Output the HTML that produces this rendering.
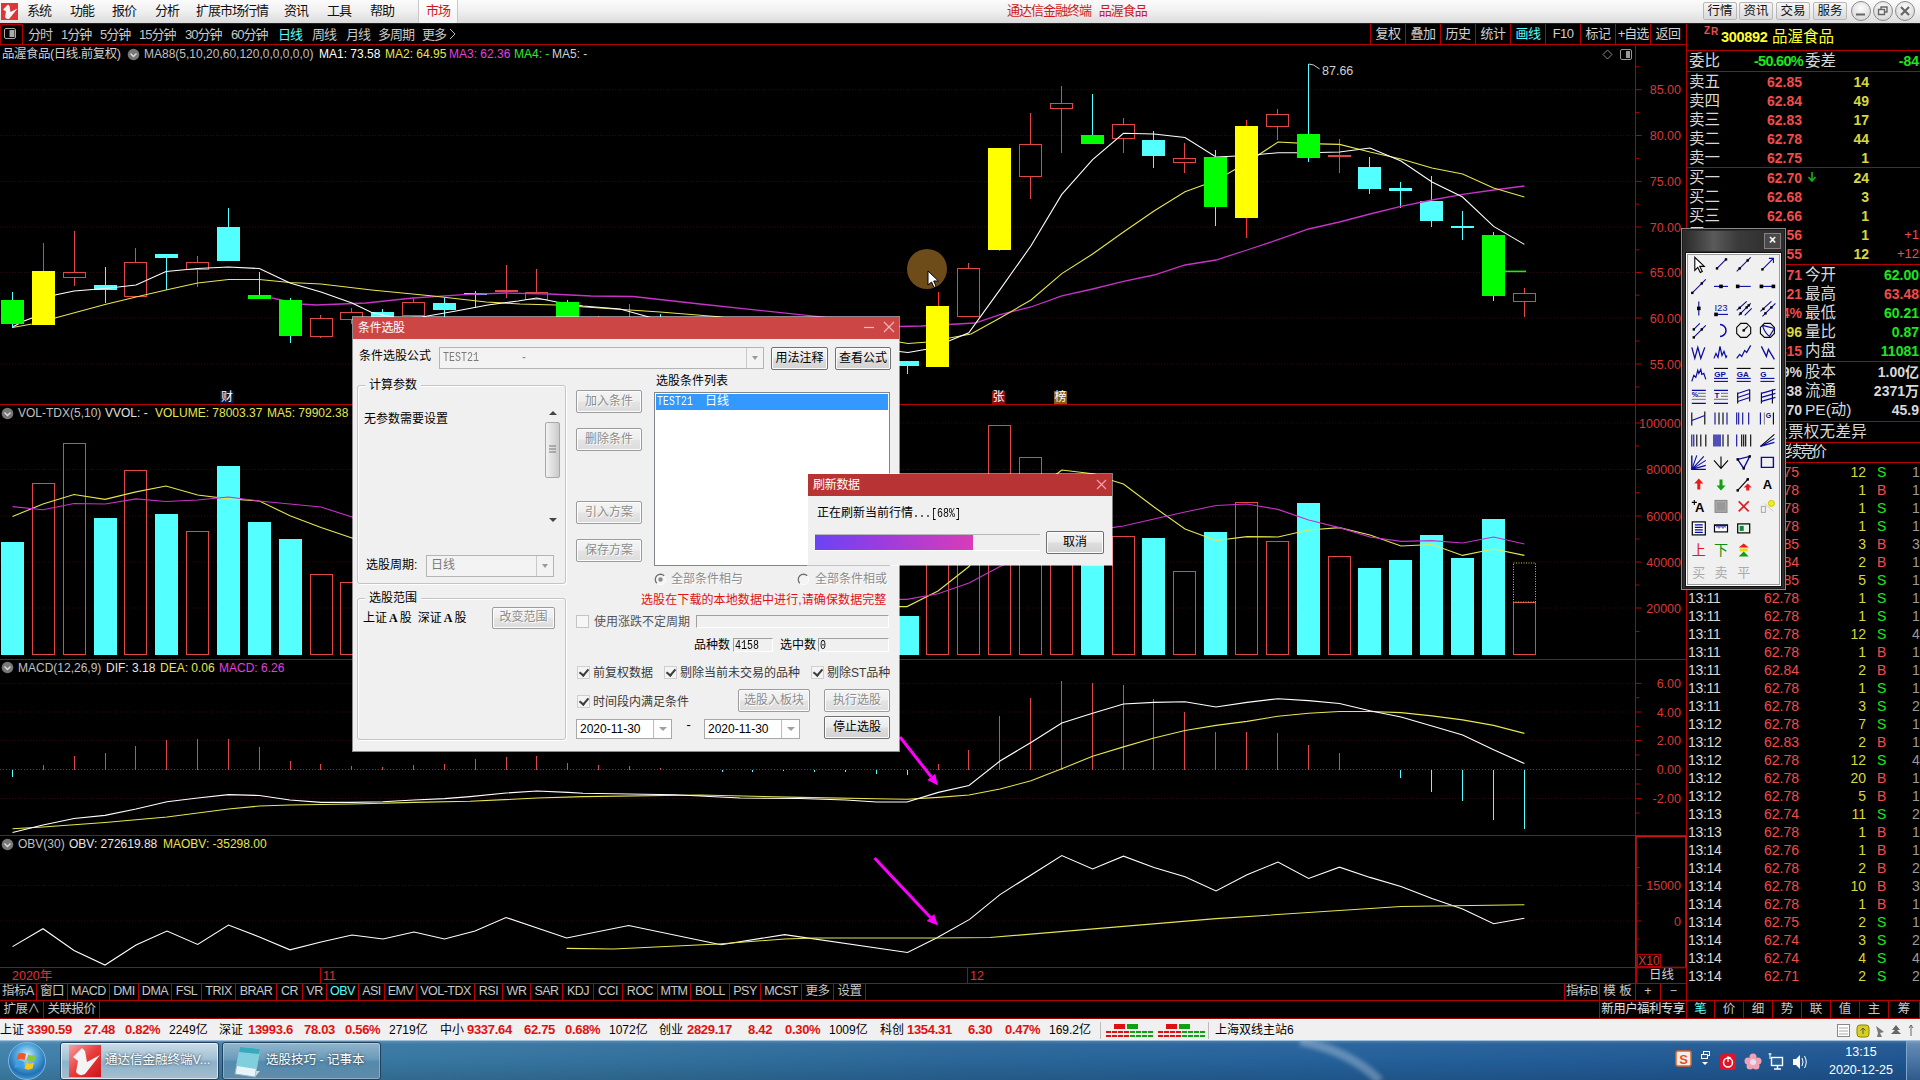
<!DOCTYPE html><html lang="zh-CN"><head><meta charset="utf-8"><title>通达信金融终端 品渥食品</title><style>

*{box-sizing:border-box;margin:0;padding:0}
html,body{width:1920px;height:1080px;overflow:hidden;background:#000}
body{position:relative;font-family:"Liberation Sans","Noto Sans CJK SC",sans-serif;font-size:12px;color:#c8c8c8;line-height:1}
svg text{font-family:"Liberation Sans","Noto Sans CJK SC",sans-serif}
.abs{position:absolute}
.t{position:absolute;white-space:nowrap}
#menubar{left:0;top:0;width:1920px;height:23px;background:linear-gradient(#fbfbfb,#f1f1f1 45%,#dcdcdc);}
#menubar .t{top:4px;font-size:13px;color:#111;letter-spacing:-1px}
.tbtn{position:absolute;top:2px;height:18px;border:1px solid #b8b8b8;border-radius:2px;background:linear-gradient(#f6f6f6,#d9d9d9);font-size:12.5px;color:#111;text-align:center;line-height:16px}
.wc{position:absolute;top:1px;width:20px;height:20px;border-radius:50%;border:1px solid #8a8a8a;background:radial-gradient(circle at 50% 35%,#fdfdfd,#cfcfcf);}
#prow .t{top:28px;font-size:13px;color:#c8c8c8}
.rb{position:absolute;top:24px;height:21px;border-left:1px solid #b40000;font-size:13px;color:#d0d0d0;text-align:center;line-height:20px}
#rp .t{font-size:14px;line-height:18px}
.w{color:#d8d8d8}.r{color:#f04c4c}.g{color:#1ee61e}.y{color:#d8d83c}.gy{color:#9a9a9a}
.b{font-weight:bold}
.hl{position:absolute;height:1px;background:#b40000}
.tab{position:absolute;top:983px;height:18px;border-right:1px solid #b40000;border-bottom:1px solid #b40000;font-size:12.5px;color:#c8c8c8;text-align:center;line-height:17px;white-space:nowrap}
#status{left:0;top:1019px;width:1920px;height:21px;background:#f0f0f0;border-top:1px solid #fff}
#status .t{top:4px;font-size:12px;color:#000}
#status .r{color:#e01010;font-weight:bold;font-size:13px;top:3px}
#taskbar{left:0;top:1040px;width:1920px;height:40px;background:linear-gradient(180deg,rgba(255,255,255,.18) 0,rgba(255,255,255,.04) 8%,rgba(0,0,0,0) 50%,rgba(0,0,0,.12) 100%),linear-gradient(90deg,#3f80aa 0,#36759f 25%,#2a6698 50%,#24609a 70%,#1f5590 100%);border-top:1px solid #9fc0dc}
.tk{position:absolute;top:1px;height:38px;border:1px solid #20405c;border-radius:3px;background:linear-gradient(rgba(255,255,255,.72),rgba(255,255,255,.52) 45%,rgba(255,255,255,.42) 52%,rgba(255,255,255,.55));box-shadow:inset 0 0 0 1px rgba(255,255,255,.6)}
.tk .t{top:11px;left:44px;font-size:12.5px;color:#fff;text-shadow:0 0 3px #123}


.dlg{position:absolute;background:#f0f0f0;color:#000;font-size:12px;font-family:"Liberation Sans","Noto Sans CJK SC",sans-serif}
.dlg .t{color:#000;font-size:12px;line-height:14px}
.dlg .ttl{position:absolute;left:0;top:0;right:0;color:#fff}
.btn{position:absolute;border:1px solid #707070;background:linear-gradient(#f4f4f4,#ececec 48%,#dedede 52%,#d2d2d2);box-shadow:inset 0 0 0 1px #fcfcfc;border-radius:2px;text-align:center;font-size:12px;color:#000;white-space:nowrap}
.btn.dis{color:#8c8c8c;border-color:#9c9c9c;background:linear-gradient(#f4f4f4,#eee 48%,#e4e4e4 52%,#dcdcdc);text-shadow:1px 1px 0 #fff}
.grp{position:absolute;border:1px solid #c4c4c4;border-radius:3px;box-shadow:inset 1px 1px 0 #fff,1px 1px 0 #fff}
.grp>b{position:absolute;top:-8px;left:7px;background:#f0f0f0;padding:0 4px;font-weight:normal;font-size:12px;line-height:14px;white-space:nowrap}
.cmb{position:absolute;border:1px solid #b4b4b4;background:#f3f3f3;color:#7a7a7a;font-size:12px;white-space:nowrap}
.cmb i{position:absolute;right:0;top:0;bottom:0;width:17px;border-left:1px solid #c8c8c8}
.cmb i:after{content:"";position:absolute;left:5px;top:50%;margin-top:-2px;border:3.5px solid transparent;border-top:4px solid #999;border-bottom:0}
.mono{font-family:"Liberation Mono",monospace;font-size:12px;display:inline-block;transform:scaleX(.833);transform-origin:0 50%;white-space:nowrap}
.chk{position:absolute;width:13px;height:13px;border:1px solid #cfcfcf;background:#f4f4f4}
.chk.on:after{content:"";position:absolute;left:3px;top:0px;width:4px;height:7px;border:solid #3c3c3c;border-width:0 2px 2px 0;transform:rotate(40deg)}
.chk.dis{border-color:#c4c4c4;background:#f6f6f6}
.fld{position:absolute;border-top:1px solid #a0a0a0;border-left:1px solid #a0a0a0;border-bottom:1px solid #fff;border-right:1px solid #fff;font-size:12px;white-space:nowrap;line-height:12px}
.dp{position:absolute;border:1px solid #a8a8a8;background:#fff;font-size:12px;white-space:nowrap;color:#000}
.dp i{position:absolute;right:0;top:0;bottom:0;width:18px;border-left:1px solid #bbb;background:#fdfdfd}
.dp i:after{content:"";position:absolute;left:5px;top:50%;margin-top:-2px;border:4px solid transparent;border-top:4px solid #a0a0a0;border-bottom:0}

</style></head><body>
<svg id="chart" width="1687" height="1000" viewBox="0 0 1687 1000" style="position:absolute;left:0;top:0" shape-rendering="auto">
<line x1="0" y1="89.7" x2="1636" y2="89.7" stroke="#340707" stroke-width="1" stroke-dasharray="1,2"/>
<line x1="0" y1="135.5" x2="1636" y2="135.5" stroke="#340707" stroke-width="1" stroke-dasharray="1,2"/>
<line x1="0" y1="181.4" x2="1636" y2="181.4" stroke="#340707" stroke-width="1" stroke-dasharray="1,2"/>
<line x1="0" y1="227" x2="1636" y2="227" stroke="#340707" stroke-width="1" stroke-dasharray="1,2"/>
<line x1="0" y1="272.5" x2="1636" y2="272.5" stroke="#340707" stroke-width="1" stroke-dasharray="1,2"/>
<line x1="0" y1="318" x2="1636" y2="318" stroke="#340707" stroke-width="1" stroke-dasharray="1,2"/>
<line x1="0" y1="364" x2="1636" y2="364" stroke="#340707" stroke-width="1" stroke-dasharray="1,2"/>
<line x1="0" y1="423" x2="1636" y2="423" stroke="#340707" stroke-width="1" stroke-dasharray="1,2"/>
<line x1="0" y1="469.5" x2="1636" y2="469.5" stroke="#340707" stroke-width="1" stroke-dasharray="1,2"/>
<line x1="0" y1="516" x2="1636" y2="516" stroke="#340707" stroke-width="1" stroke-dasharray="1,2"/>
<line x1="0" y1="562" x2="1636" y2="562" stroke="#340707" stroke-width="1" stroke-dasharray="1,2"/>
<line x1="0" y1="608" x2="1636" y2="608" stroke="#340707" stroke-width="1" stroke-dasharray="1,2"/>
<line x1="0" y1="683.4" x2="1636" y2="683.4" stroke="#340707" stroke-width="1" stroke-dasharray="1,2"/>
<line x1="0" y1="712" x2="1636" y2="712" stroke="#340707" stroke-width="1" stroke-dasharray="1,2"/>
<line x1="0" y1="740.5" x2="1636" y2="740.5" stroke="#340707" stroke-width="1" stroke-dasharray="1,2"/>
<line x1="0" y1="798.6" x2="1636" y2="798.6" stroke="#340707" stroke-width="1" stroke-dasharray="1,2"/>
<line x1="0" y1="769.5" x2="1636" y2="769.5" stroke="#a02020" stroke-width="1" stroke-dasharray="1,2"/>
<line x1="0" y1="885.5" x2="1636" y2="885.5" stroke="#340707" stroke-width="1" stroke-dasharray="1,2"/>
<line x1="0" y1="921" x2="1636" y2="921" stroke="#340707" stroke-width="1" stroke-dasharray="1,2"/>
<line x1="0" y1="44.5" x2="1687" y2="44.5" stroke="#b40000" stroke-width="1"/>
<line x1="0" y1="404.5" x2="1687" y2="404.5" stroke="#b40000" stroke-width="1"/>
<line x1="0" y1="659.5" x2="1687" y2="659.5" stroke="#b40000" stroke-width="1"/>
<line x1="0" y1="835.5" x2="1687" y2="835.5" stroke="#b40000" stroke-width="1"/>
<line x1="0" y1="967.5" x2="1687" y2="967.5" stroke="#b40000" stroke-width="1"/>
<line x1="0" y1="983.5" x2="1687" y2="983.5" stroke="#b40000" stroke-width="1"/>
<line x1="1635.5" y1="45" x2="1635.5" y2="983" stroke="#b40000" stroke-width="1"/>
<line x1="1686.5" y1="24" x2="1686.5" y2="1018" stroke="#b40000" stroke-width="1"/>
<rect x="1636" y="836.5" width="50" height="131" fill="none" stroke="#cc1616" stroke-width="1.5"/>
<line x1="1636" y1="66.8" x2="1639" y2="66.8" stroke="#b40000"/>
<line x1="1636" y1="112.6" x2="1639" y2="112.6" stroke="#b40000"/>
<line x1="1636" y1="158.4" x2="1639" y2="158.4" stroke="#b40000"/>
<line x1="1636" y1="204.2" x2="1639" y2="204.2" stroke="#b40000"/>
<line x1="1636" y1="249.8" x2="1639" y2="249.8" stroke="#b40000"/>
<line x1="1636" y1="295.2" x2="1639" y2="295.2" stroke="#b40000"/>
<line x1="1636" y1="341" x2="1639" y2="341" stroke="#b40000"/>
<line x1="1636" y1="387" x2="1639" y2="387" stroke="#b40000"/>
<line x1="1636" y1="446" x2="1639" y2="446" stroke="#b40000"/>
<line x1="1636" y1="492.7" x2="1639" y2="492.7" stroke="#b40000"/>
<line x1="1636" y1="539" x2="1639" y2="539" stroke="#b40000"/>
<line x1="1636" y1="585" x2="1639" y2="585" stroke="#b40000"/>
<line x1="1636" y1="631.5" x2="1639" y2="631.5" stroke="#b40000"/>
<line x1="1636" y1="697.7" x2="1639" y2="697.7" stroke="#b40000"/>
<line x1="1636" y1="726.3" x2="1639" y2="726.3" stroke="#b40000"/>
<line x1="1636" y1="755" x2="1639" y2="755" stroke="#b40000"/>
<line x1="1636" y1="784" x2="1639" y2="784" stroke="#b40000"/>
<line x1="1636" y1="813" x2="1639" y2="813" stroke="#b40000"/>
<line x1="1636" y1="867.5" x2="1639" y2="867.5" stroke="#b40000"/>
<line x1="1636" y1="903" x2="1639" y2="903" stroke="#b40000"/>
<line x1="1636" y1="939" x2="1639" y2="939" stroke="#b40000"/>
<line x1="1636" y1="89.7" x2="1641" y2="89.7" stroke="#b40000"/>
<text x="1681" y="94.2" text-anchor="end" font-size="12.5" fill="#d83838">85.00</text>
<line x1="1636" y1="135.5" x2="1641" y2="135.5" stroke="#b40000"/>
<text x="1681" y="140.0" text-anchor="end" font-size="12.5" fill="#d83838">80.00</text>
<line x1="1636" y1="181.4" x2="1641" y2="181.4" stroke="#b40000"/>
<text x="1681" y="185.9" text-anchor="end" font-size="12.5" fill="#d83838">75.00</text>
<line x1="1636" y1="227" x2="1641" y2="227" stroke="#b40000"/>
<text x="1681" y="231.5" text-anchor="end" font-size="12.5" fill="#d83838">70.00</text>
<line x1="1636" y1="272.5" x2="1641" y2="272.5" stroke="#b40000"/>
<text x="1681" y="277.0" text-anchor="end" font-size="12.5" fill="#d83838">65.00</text>
<line x1="1636" y1="318" x2="1641" y2="318" stroke="#b40000"/>
<text x="1681" y="322.5" text-anchor="end" font-size="12.5" fill="#d83838">60.00</text>
<line x1="1636" y1="364" x2="1641" y2="364" stroke="#b40000"/>
<text x="1681" y="368.5" text-anchor="end" font-size="12.5" fill="#d83838">55.00</text>
<line x1="1636" y1="469.5" x2="1641" y2="469.5" stroke="#b40000"/>
<text x="1681" y="474.0" text-anchor="end" font-size="12.5" fill="#d83838">80000</text>
<line x1="1636" y1="516" x2="1641" y2="516" stroke="#b40000"/>
<text x="1681" y="520.5" text-anchor="end" font-size="12.5" fill="#d83838">60000</text>
<line x1="1636" y1="562" x2="1641" y2="562" stroke="#b40000"/>
<text x="1681" y="566.5" text-anchor="end" font-size="12.5" fill="#d83838">40000</text>
<line x1="1636" y1="608" x2="1641" y2="608" stroke="#b40000"/>
<text x="1681" y="612.5" text-anchor="end" font-size="12.5" fill="#d83838">20000</text>
<line x1="1636" y1="423" x2="1641" y2="423" stroke="#b40000"/><text x="1639" y="427.5" font-size="12.5" fill="#d83838">100000</text>
<line x1="1636" y1="683.4" x2="1641" y2="683.4" stroke="#b40000"/>
<text x="1681" y="687.9" text-anchor="end" font-size="12.5" fill="#d83838">6.00</text>
<line x1="1636" y1="712" x2="1641" y2="712" stroke="#b40000"/>
<text x="1681" y="716.5" text-anchor="end" font-size="12.5" fill="#d83838">4.00</text>
<line x1="1636" y1="740.5" x2="1641" y2="740.5" stroke="#b40000"/>
<text x="1681" y="745.0" text-anchor="end" font-size="12.5" fill="#d83838">2.00</text>
<line x1="1636" y1="769.5" x2="1641" y2="769.5" stroke="#b40000"/>
<text x="1681" y="774.0" text-anchor="end" font-size="12.5" fill="#d83838">0.00</text>
<line x1="1636" y1="798.6" x2="1641" y2="798.6" stroke="#b40000"/>
<text x="1681" y="803.1" text-anchor="end" font-size="12.5" fill="#d83838">-2.00</text>
<line x1="1636" y1="885.5" x2="1641" y2="885.5" stroke="#b40000"/>
<text x="1681" y="890.0" text-anchor="end" font-size="12.5" fill="#d83838">15000</text>
<line x1="1636" y1="921" x2="1641" y2="921" stroke="#b40000"/>
<text x="1681" y="925.5" text-anchor="end" font-size="12.5" fill="#d83838">0</text>
<rect x="1637.5" y="954.5" width="23" height="12" fill="none" stroke="#b40000"/><text x="1649" y="965" text-anchor="middle" font-size="12" fill="#d83838">X10</text>
<path d="M74.5 231V272M74.5 277V286" stroke="#e04848" stroke-width="1" shape-rendering="crispEdges"/>
<rect x="63.5" y="272.5" width="22" height="5" fill="#000" stroke="#e04848" stroke-width="1" shape-rendering="crispEdges"/>
<path d="M105.5 267V302.5" stroke="#54ffff" stroke-width="1" shape-rendering="crispEdges"/>
<rect x="94" y="285" width="23" height="5" fill="#54ffff" shape-rendering="crispEdges"/>
<path d="M135.5 248V262.5M135.5 296V296" stroke="#e04848" stroke-width="1" shape-rendering="crispEdges"/>
<rect x="124.5" y="262.5" width="22" height="34" fill="#000" stroke="#e04848" stroke-width="1" shape-rendering="crispEdges"/>
<path d="M166.5 254V290" stroke="#54ffff" stroke-width="1" shape-rendering="crispEdges"/>
<rect x="155" y="254" width="23" height="4" fill="#54ffff" shape-rendering="crispEdges"/>
<path d="M197.5 256V262.5M197.5 268.7V286.7" stroke="#e04848" stroke-width="1" shape-rendering="crispEdges"/>
<rect x="186.5" y="262.5" width="22" height="7" fill="#000" stroke="#e04848" stroke-width="1" shape-rendering="crispEdges"/>
<path d="M228.5 208V261" stroke="#54ffff" stroke-width="1" shape-rendering="crispEdges"/>
<rect x="217" y="227" width="23" height="34" fill="#54ffff" shape-rendering="crispEdges"/>
<path d="M320.5 315V317.5M320.5 336V338" stroke="#e04848" stroke-width="1" shape-rendering="crispEdges"/>
<rect x="310.5" y="318.5" width="22" height="18" fill="#000" stroke="#e04848" stroke-width="1" shape-rendering="crispEdges"/>
<path d="M351.5 307.5V311.7M351.5 319V324" stroke="#e04848" stroke-width="1" shape-rendering="crispEdges"/>
<rect x="340.5" y="312.5" width="22" height="7" fill="#000" stroke="#e04848" stroke-width="1" shape-rendering="crispEdges"/>
<path d="M382.5 309V322" stroke="#54ffff" stroke-width="1" shape-rendering="crispEdges"/>
<rect x="371" y="312" width="23" height="8" fill="#54ffff" shape-rendering="crispEdges"/>
<path d="M413.5 297.5V302M413.5 315V316" stroke="#e04848" stroke-width="1" shape-rendering="crispEdges"/>
<rect x="402.5" y="302.5" width="22" height="13" fill="#000" stroke="#e04848" stroke-width="1" shape-rendering="crispEdges"/>
<path d="M444.5 297.5V320" stroke="#54ffff" stroke-width="1" shape-rendering="crispEdges"/>
<rect x="433" y="303" width="23" height="7" fill="#54ffff" shape-rendering="crispEdges"/>
<path d="M475.5 291V308" stroke="#54ffff" stroke-width="1" shape-rendering="crispEdges"/>
<rect x="464" y="293" width="23" height="2" fill="#54ffff" shape-rendering="crispEdges"/>
<path d="M506.5 265V290M506.5 291.7V297.5" stroke="#e04848" stroke-width="1" shape-rendering="crispEdges"/>
<rect x="495" y="290" width="23" height="2" fill="#e04848" shape-rendering="crispEdges"/>
<path d="M536.5 269V292.5M536.5 298.7V298.7" stroke="#e04848" stroke-width="1" shape-rendering="crispEdges"/>
<rect x="525.5" y="292.5" width="22" height="7" fill="#000" stroke="#e04848" stroke-width="1" shape-rendering="crispEdges"/>
<path d="M598.5 316V318M598.5 330V332" stroke="#e04848" stroke-width="1" shape-rendering="crispEdges"/>
<rect x="587.5" y="318.5" width="22" height="12" fill="#000" stroke="#e04848" stroke-width="1" shape-rendering="crispEdges"/>
<path d="M629.5 304V319M629.5 326V328" stroke="#e04848" stroke-width="1" shape-rendering="crispEdges"/>
<rect x="618.5" y="319.5" width="22" height="7" fill="#000" stroke="#e04848" stroke-width="1" shape-rendering="crispEdges"/>
<path d="M660.5 314V330" stroke="#54ffff" stroke-width="1" shape-rendering="crispEdges"/>
<rect x="649" y="320" width="23" height="8" fill="#54ffff" shape-rendering="crispEdges"/>
<path d="M691.5 318V322M691.5 332V334" stroke="#e04848" stroke-width="1" shape-rendering="crispEdges"/>
<rect x="680.5" y="322.5" width="22" height="10" fill="#000" stroke="#e04848" stroke-width="1" shape-rendering="crispEdges"/>
<path d="M722.5 328V342" stroke="#54ffff" stroke-width="1" shape-rendering="crispEdges"/>
<rect x="711" y="330" width="23" height="10" fill="#54ffff" shape-rendering="crispEdges"/>
<path d="M752.5 334V346" stroke="#54ffff" stroke-width="1" shape-rendering="crispEdges"/>
<rect x="741" y="336" width="23" height="8" fill="#54ffff" shape-rendering="crispEdges"/>
<path d="M783.5 338V340M783.5 346V350" stroke="#e04848" stroke-width="1" shape-rendering="crispEdges"/>
<rect x="772.5" y="340.5" width="22" height="6" fill="#000" stroke="#e04848" stroke-width="1" shape-rendering="crispEdges"/>
<path d="M814.5 342V354" stroke="#54ffff" stroke-width="1" shape-rendering="crispEdges"/>
<rect x="803" y="344" width="23" height="8" fill="#54ffff" shape-rendering="crispEdges"/>
<path d="M845.5 348V360" stroke="#54ffff" stroke-width="1" shape-rendering="crispEdges"/>
<rect x="834" y="350" width="23" height="8" fill="#54ffff" shape-rendering="crispEdges"/>
<path d="M876.5 354V366" stroke="#54ffff" stroke-width="1" shape-rendering="crispEdges"/>
<rect x="865" y="356" width="23" height="7" fill="#54ffff" shape-rendering="crispEdges"/>
<path d="M907.5 361V374" stroke="#54ffff" stroke-width="1" shape-rendering="crispEdges"/>
<rect x="896" y="361" width="23" height="5" fill="#54ffff" shape-rendering="crispEdges"/>
<path d="M968.5 263V268M968.5 315.6V315.6" stroke="#e04848" stroke-width="1" shape-rendering="crispEdges"/>
<rect x="957.5" y="268.5" width="22" height="48" fill="#000" stroke="#e04848" stroke-width="1" shape-rendering="crispEdges"/>
<path d="M1030.5 113V144.4M1030.5 176.4V198.6" stroke="#e04848" stroke-width="1" shape-rendering="crispEdges"/>
<rect x="1019.5" y="144.5" width="22" height="32" fill="#000" stroke="#e04848" stroke-width="1" shape-rendering="crispEdges"/>
<path d="M1061.5 86V103M1061.5 107.8V152.8" stroke="#e04848" stroke-width="1" shape-rendering="crispEdges"/>
<rect x="1050.5" y="103.5" width="22" height="5" fill="#000" stroke="#e04848" stroke-width="1" shape-rendering="crispEdges"/>
<path d="M1123.5 117.5V124M1123.5 138V152.8" stroke="#e04848" stroke-width="1" shape-rendering="crispEdges"/>
<rect x="1112.5" y="124.5" width="22" height="14" fill="#000" stroke="#e04848" stroke-width="1" shape-rendering="crispEdges"/>
<path d="M1153.5 130.5V168" stroke="#54ffff" stroke-width="1" shape-rendering="crispEdges"/>
<rect x="1142" y="140" width="23" height="16" fill="#54ffff" shape-rendering="crispEdges"/>
<path d="M1184.5 142.5V158M1184.5 162.5V173" stroke="#e04848" stroke-width="1" shape-rendering="crispEdges"/>
<rect x="1173.5" y="158.5" width="22" height="4" fill="#000" stroke="#e04848" stroke-width="1" shape-rendering="crispEdges"/>
<path d="M1277.5 109V114.4M1277.5 125.5V139.7" stroke="#e04848" stroke-width="1" shape-rendering="crispEdges"/>
<rect x="1266.5" y="114.5" width="22" height="12" fill="#000" stroke="#e04848" stroke-width="1" shape-rendering="crispEdges"/>
<path d="M1339.5 139V154.7M1339.5 157V173" stroke="#e04848" stroke-width="1" shape-rendering="crispEdges"/>
<rect x="1328" y="155" width="23" height="2" fill="#e04848" shape-rendering="crispEdges"/>
<path d="M1369.5 157V194" stroke="#54ffff" stroke-width="1" shape-rendering="crispEdges"/>
<rect x="1358" y="167" width="23" height="22" fill="#54ffff" shape-rendering="crispEdges"/>
<path d="M1400.5 182V208" stroke="#54ffff" stroke-width="1" shape-rendering="crispEdges"/>
<rect x="1389" y="188" width="23" height="3" fill="#54ffff" shape-rendering="crispEdges"/>
<path d="M1431.5 175.8V227" stroke="#54ffff" stroke-width="1" shape-rendering="crispEdges"/>
<rect x="1420" y="201" width="23" height="20" fill="#54ffff" shape-rendering="crispEdges"/>
<path d="M1462.5 211V240" stroke="#54ffff" stroke-width="1" shape-rendering="crispEdges"/>
<rect x="1451" y="226" width="23" height="2" fill="#54ffff" shape-rendering="crispEdges"/>
<path d="M1524.5 287.5V293M1524.5 300.8V316.7" stroke="#e04848" stroke-width="1" shape-rendering="crispEdges"/>
<rect x="1513.5" y="293.5" width="22" height="8" fill="#000" stroke="#e04848" stroke-width="1" shape-rendering="crispEdges"/>
<polyline points="272.0,298.0 300.0,304.0 316.0,305.0 366.0,303.0 413.0,298.0 464.0,294.7 506.0,293.0 550.0,294.0 591.0,296.0 633.0,296.5 700.0,304.0 818.8,316.7 860.0,322.0 899.0,326.5 921.0,326.0 975.0,323.0 1000.0,314.6 1031.0,307.0 1061.8,295.8 1092.6,289.0 1123.5,281.4 1154.0,275.0 1185.0,265.0 1216.0,260.0 1247.0,250.0 1278.0,239.7 1308.6,229.0 1339.5,222.0 1370.0,214.0 1401.0,206.4 1432.0,200.0 1462.6,194.4 1493.6,190.0 1524.4,186.0" fill="none" stroke="#c832c8" stroke-width="1.3" />
<polyline points="12.5,327.5 32.0,324.0 55.0,318.0 105.0,304.5 136.0,297.0 166.0,290.0 197.7,283.0 228.5,279.5 259.4,279.5 290.0,282.5 321.0,284.0 371.7,290.0 433.0,296.0 486.0,302.0 520.0,304.0 556.0,305.0 600.0,308.0 660.0,312.0 718.8,316.7 800.0,328.0 860.0,338.0 899.0,342.0 908.0,343.5 928.0,342.0 971.0,334.0 1000.0,318.0 1031.0,300.0 1061.8,273.6 1092.6,254.0 1123.5,232.0 1154.0,211.0 1185.0,191.7 1216.0,180.5 1247.0,162.5 1278.0,142.0 1308.6,143.6 1339.5,144.4 1370.0,152.0 1401.0,159.0 1432.0,168.0 1462.6,174.0 1493.6,188.0 1524.4,197.0" fill="none" stroke="#e6e650" stroke-width="1.1" />
<polyline points="12.5,327.0 24.0,321.0 32.0,318.0 55.0,295.0 74.0,291.0 105.0,288.5 136.0,285.0 166.0,271.5 197.7,268.5 228.5,267.0 259.4,268.5 290.0,283.0 321.0,292.0 352.0,303.0 371.7,312.5 397.0,318.0 422.0,317.0 456.0,311.0 488.0,305.0 518.0,301.0 536.7,298.0 556.7,302.0 583.0,306.0 620.0,309.0 648.0,316.7 700.0,330.0 800.0,342.0 876.0,350.0 899.0,351.5 908.0,352.5 928.0,349.0 950.0,340.6 968.8,332.8 1000.0,289.6 1031.0,245.8 1061.8,194.4 1092.6,159.7 1123.5,133.3 1154.0,134.0 1185.0,137.5 1216.0,157.0 1247.0,155.5 1278.0,152.8 1308.6,152.8 1339.5,152.0 1370.0,148.0 1401.0,161.0 1432.0,182.0 1462.6,197.0 1493.6,226.4 1524.4,244.4" fill="none" stroke="#ffffff" stroke-width="1.1" />
<path d="M12.5 292V327.5" stroke="#54ffff" stroke-width="1" shape-rendering="crispEdges"/>
<rect x="1" y="300" width="23" height="24" fill="#00ff00" shape-rendering="crispEdges"/>
<path d="M43.5 242.5V325" stroke="#ff3232" stroke-width="1" shape-rendering="crispEdges"/>
<rect x="32" y="271" width="23" height="54" fill="#ffff00" shape-rendering="crispEdges"/>
<path d="M259.5 272V299" stroke="#54ffff" stroke-width="1" shape-rendering="crispEdges"/>
<rect x="248" y="295" width="23" height="4" fill="#00ff00" shape-rendering="crispEdges"/>
<path d="M290.5 298V343" stroke="#54ffff" stroke-width="1" shape-rendering="crispEdges"/>
<rect x="279" y="300" width="23" height="36" fill="#00ff00" shape-rendering="crispEdges"/>
<path d="M567.5 300V324" stroke="#54ffff" stroke-width="1" shape-rendering="crispEdges"/>
<rect x="556" y="302" width="23" height="20" fill="#00ff00" shape-rendering="crispEdges"/>
<path d="M938.5 291.7V366.7" stroke="#ff3232" stroke-width="1" shape-rendering="crispEdges"/>
<rect x="926" y="306" width="23" height="61" fill="#ffff00" shape-rendering="crispEdges"/>
<path d="M999.5 147.8V250.5" stroke="#ff3232" stroke-width="1" shape-rendering="crispEdges"/>
<rect x="988" y="148" width="23" height="102" fill="#ffff00" shape-rendering="crispEdges"/>
<path d="M1092.5 93.6V144.4" stroke="#54ffff" stroke-width="1" shape-rendering="crispEdges"/>
<rect x="1081" y="135" width="23" height="9" fill="#00ff00" shape-rendering="crispEdges"/>
<path d="M1215.5 150V226.4" stroke="#54ffff" stroke-width="1" shape-rendering="crispEdges"/>
<rect x="1204" y="157" width="23" height="50" fill="#00ff00" shape-rendering="crispEdges"/>
<path d="M1246.5 120V238" stroke="#ff3232" stroke-width="1" shape-rendering="crispEdges"/>
<rect x="1235" y="126" width="23" height="92" fill="#ffff00" shape-rendering="crispEdges"/>
<path d="M1308.5 64V162" stroke="#54ffff" stroke-width="1" shape-rendering="crispEdges"/>
<rect x="1297" y="134" width="23" height="24" fill="#00ff00" shape-rendering="crispEdges"/>
<path d="M1493.5 232V301" stroke="#54ffff" stroke-width="1" shape-rendering="crispEdges"/>
<rect x="1482" y="235" width="23" height="61" fill="#00ff00" shape-rendering="crispEdges"/>
<line x1="1505" y1="271.4" x2="1526" y2="271.4" stroke="#00ff00" stroke-width="1.6"/>
<path d="M1308.6 64 l5 1 l6 4" stroke="#ccc" fill="none"/><text x="1322" y="75" font-size="12.5" fill="#d0d0d0">87.66</text>
<rect x="1" y="542" width="23" height="113" fill="#54ffff" shape-rendering="crispEdges"/>
<rect x="32.5" y="483.5" width="22" height="171" fill="none" stroke="#e04848" stroke-width="1" shape-rendering="crispEdges"/>
<rect x="63.5" y="443.5" width="22" height="211" fill="none" stroke="#e04848" stroke-width="1" shape-rendering="crispEdges"/>
<rect x="94" y="518" width="23" height="137" fill="#54ffff" shape-rendering="crispEdges"/>
<rect x="124.5" y="470.5" width="22" height="184" fill="none" stroke="#e04848" stroke-width="1" shape-rendering="crispEdges"/>
<rect x="155" y="514" width="23" height="141" fill="#54ffff" shape-rendering="crispEdges"/>
<rect x="186.5" y="531.5" width="22" height="123" fill="none" stroke="#e04848" stroke-width="1" shape-rendering="crispEdges"/>
<rect x="217" y="466" width="23" height="189" fill="#54ffff" shape-rendering="crispEdges"/>
<rect x="248" y="522" width="23" height="133" fill="#54ffff" shape-rendering="crispEdges"/>
<rect x="279" y="539" width="23" height="116" fill="#54ffff" shape-rendering="crispEdges"/>
<rect x="310.5" y="574.5" width="22" height="80" fill="none" stroke="#e04848" stroke-width="1" shape-rendering="crispEdges"/>
<rect x="340.5" y="582.5" width="22" height="72" fill="none" stroke="#e04848" stroke-width="1" shape-rendering="crispEdges"/>
<rect x="371" y="590" width="23" height="65" fill="#54ffff" shape-rendering="crispEdges"/>
<rect x="402.5" y="585.5" width="22" height="69" fill="none" stroke="#e04848" stroke-width="1" shape-rendering="crispEdges"/>
<rect x="433" y="596" width="23" height="59" fill="#54ffff" shape-rendering="crispEdges"/>
<rect x="464" y="600" width="23" height="55" fill="#54ffff" shape-rendering="crispEdges"/>
<rect x="495.5" y="588.5" width="22" height="66" fill="none" stroke="#e04848" stroke-width="1" shape-rendering="crispEdges"/>
<rect x="525.5" y="592.5" width="22" height="62" fill="none" stroke="#e04848" stroke-width="1" shape-rendering="crispEdges"/>
<rect x="556" y="580" width="23" height="75" fill="#54ffff" shape-rendering="crispEdges"/>
<rect x="587.5" y="600.5" width="22" height="54" fill="none" stroke="#e04848" stroke-width="1" shape-rendering="crispEdges"/>
<rect x="618.5" y="604.5" width="22" height="50" fill="none" stroke="#e04848" stroke-width="1" shape-rendering="crispEdges"/>
<rect x="649" y="610" width="23" height="45" fill="#54ffff" shape-rendering="crispEdges"/>
<rect x="680.5" y="612.5" width="22" height="42" fill="none" stroke="#e04848" stroke-width="1" shape-rendering="crispEdges"/>
<rect x="711" y="614" width="23" height="41" fill="#54ffff" shape-rendering="crispEdges"/>
<rect x="741" y="616" width="23" height="39" fill="#54ffff" shape-rendering="crispEdges"/>
<rect x="772.5" y="612.5" width="22" height="42" fill="none" stroke="#e04848" stroke-width="1" shape-rendering="crispEdges"/>
<rect x="803" y="618" width="23" height="37" fill="#54ffff" shape-rendering="crispEdges"/>
<rect x="834" y="616" width="23" height="39" fill="#54ffff" shape-rendering="crispEdges"/>
<rect x="865" y="614" width="23" height="41" fill="#54ffff" shape-rendering="crispEdges"/>
<rect x="896" y="616" width="23" height="39" fill="#54ffff" shape-rendering="crispEdges"/>
<rect x="926.5" y="560.5" width="22" height="94" fill="none" stroke="#e04848" stroke-width="1" shape-rendering="crispEdges"/>
<rect x="957.5" y="520.5" width="22" height="134" fill="none" stroke="#e04848" stroke-width="1" shape-rendering="crispEdges"/>
<rect x="988.5" y="425.5" width="22" height="229" fill="none" stroke="#e04848" stroke-width="1" shape-rendering="crispEdges"/>
<rect x="1019.5" y="457.5" width="22" height="197" fill="none" stroke="#e04848" stroke-width="1" shape-rendering="crispEdges"/>
<rect x="1050.5" y="500.5" width="22" height="154" fill="none" stroke="#e04848" stroke-width="1" shape-rendering="crispEdges"/>
<rect x="1081" y="520" width="23" height="135" fill="#54ffff" shape-rendering="crispEdges"/>
<rect x="1112.5" y="536.5" width="22" height="118" fill="none" stroke="#e04848" stroke-width="1" shape-rendering="crispEdges"/>
<rect x="1142" y="538" width="23" height="117" fill="#54ffff" shape-rendering="crispEdges"/>
<rect x="1173.5" y="571.5" width="22" height="83" fill="none" stroke="#e04848" stroke-width="1" shape-rendering="crispEdges"/>
<rect x="1204" y="532" width="23" height="123" fill="#54ffff" shape-rendering="crispEdges"/>
<rect x="1235.5" y="502.5" width="22" height="152" fill="none" stroke="#e04848" stroke-width="1" shape-rendering="crispEdges"/>
<rect x="1266.5" y="541.5" width="22" height="113" fill="none" stroke="#e04848" stroke-width="1" shape-rendering="crispEdges"/>
<rect x="1297" y="503" width="23" height="152" fill="#54ffff" shape-rendering="crispEdges"/>
<rect x="1328.5" y="556.5" width="22" height="98" fill="none" stroke="#e04848" stroke-width="1" shape-rendering="crispEdges"/>
<rect x="1358" y="568" width="23" height="87" fill="#54ffff" shape-rendering="crispEdges"/>
<rect x="1389" y="560" width="23" height="95" fill="#54ffff" shape-rendering="crispEdges"/>
<rect x="1420" y="535" width="23" height="120" fill="#54ffff" shape-rendering="crispEdges"/>
<rect x="1451" y="558" width="23" height="97" fill="#54ffff" shape-rendering="crispEdges"/>
<rect x="1482" y="519" width="23" height="136" fill="#54ffff" shape-rendering="crispEdges"/>
<rect x="1513.5" y="602.5" width="22" height="52" fill="none" stroke="#e04848" stroke-width="1" shape-rendering="crispEdges"/>
<rect x="1513.5" y="563" width="22" height="39" fill="none" stroke="#c8c832" stroke-dasharray="1,1.5"/>
<polyline points="12.5,516.5 43.0,504.0 74.0,494.5 105.0,499.4 136.0,491.9 166.0,486.0 197.7,495.0 228.5,498.9 259.4,501.0 290.0,515.7 321.0,527.4 352.0,538.0 420.0,560.0 600.0,600.0 800.0,612.0 899.0,606.6 907.0,606.6 938.0,591.0 969.0,566.5 1000.0,520.0 1031.0,490.0 1058.0,473.0 1061.8,470.0 1094.8,474.0 1112.0,480.4 1123.5,484.0 1154.0,507.0 1185.0,529.0 1216.0,540.5 1247.0,536.6 1278.0,537.0 1308.6,530.0 1339.5,527.6 1370.0,535.0 1401.0,546.0 1432.0,544.5 1462.6,555.4 1493.6,549.0 1524.4,555.4" fill="none" stroke="#e6e650" stroke-width="1.1" />
<polyline points="12.5,506.6 43.0,509.7 74.0,503.5 105.0,504.0 136.0,498.9 166.0,501.5 197.7,500.0 228.5,497.0 259.4,501.0 290.0,504.0 321.0,507.0 352.0,517.0 420.0,540.0 600.0,590.0 800.0,604.0 899.0,599.4 907.0,599.4 938.0,593.7 969.0,583.0 1000.0,566.5 1050.0,545.0 1112.0,527.6 1123.5,526.0 1154.0,519.0 1185.0,512.0 1216.0,505.5 1247.0,504.0 1278.0,509.4 1308.6,520.0 1339.5,527.6 1370.0,537.0 1401.0,541.4 1432.0,540.6 1462.6,543.0 1493.6,537.0 1524.4,544.0" fill="none" stroke="#c832c8" stroke-width="1.1" />
<line x1="12.5" y1="769.5" x2="12.5" y2="776.6" stroke="#54ffff" stroke-width="1" shape-rendering="crispEdges"/>
<line x1="43.5" y1="769.5" x2="43.5" y2="765" stroke="#e04848" stroke-width="1" shape-rendering="crispEdges"/>
<line x1="74.5" y1="769.5" x2="74.5" y2="755.8" stroke="#e04848" stroke-width="1" shape-rendering="crispEdges"/>
<line x1="105.5" y1="769.5" x2="105.5" y2="752.7" stroke="#e04848" stroke-width="1" shape-rendering="crispEdges"/>
<line x1="135.5" y1="769.5" x2="135.5" y2="745.6" stroke="#e04848" stroke-width="1" shape-rendering="crispEdges"/>
<line x1="166.5" y1="769.5" x2="166.5" y2="740.3" stroke="#e04848" stroke-width="1" shape-rendering="crispEdges"/>
<line x1="197.5" y1="769.5" x2="197.5" y2="739.4" stroke="#e04848" stroke-width="1" shape-rendering="crispEdges"/>
<line x1="228.5" y1="769.5" x2="228.5" y2="738.8" stroke="#e04848" stroke-width="1" shape-rendering="crispEdges"/>
<line x1="259.5" y1="769.5" x2="259.5" y2="746.5" stroke="#e04848" stroke-width="1" shape-rendering="crispEdges"/>
<line x1="290.5" y1="769.5" x2="290.5" y2="760.5" stroke="#e04848" stroke-width="1" shape-rendering="crispEdges"/>
<line x1="320.5" y1="769.5" x2="320.5" y2="764" stroke="#e04848" stroke-width="1" shape-rendering="crispEdges"/>
<line x1="351.5" y1="769.5" x2="351.5" y2="766" stroke="#e04848" stroke-width="1" shape-rendering="crispEdges"/>
<line x1="382.5" y1="769.5" x2="382.5" y2="767" stroke="#e04848" stroke-width="1" shape-rendering="crispEdges"/>
<line x1="413.5" y1="769.5" x2="413.5" y2="765" stroke="#e04848" stroke-width="1" shape-rendering="crispEdges"/>
<line x1="444.5" y1="769.5" x2="444.5" y2="764" stroke="#e04848" stroke-width="1" shape-rendering="crispEdges"/>
<line x1="475.5" y1="769.5" x2="475.5" y2="759.3" stroke="#e04848" stroke-width="1" shape-rendering="crispEdges"/>
<line x1="506.5" y1="769.5" x2="506.5" y2="756.6" stroke="#e04848" stroke-width="1" shape-rendering="crispEdges"/>
<line x1="536.5" y1="769.5" x2="536.5" y2="755.7" stroke="#e04848" stroke-width="1" shape-rendering="crispEdges"/>
<line x1="567.5" y1="769.5" x2="567.5" y2="762.6" stroke="#e04848" stroke-width="1" shape-rendering="crispEdges"/>
<line x1="598.5" y1="769.5" x2="598.5" y2="765.4" stroke="#e04848" stroke-width="1" shape-rendering="crispEdges"/>
<line x1="629.5" y1="769.5" x2="629.5" y2="766.2" stroke="#e04848" stroke-width="1" shape-rendering="crispEdges"/>
<line x1="660.5" y1="769.5" x2="660.5" y2="767.6" stroke="#e04848" stroke-width="1" shape-rendering="crispEdges"/>
<line x1="722.5" y1="769.5" x2="722.5" y2="771.7" stroke="#54ffff" stroke-width="1" shape-rendering="crispEdges"/>
<line x1="752.5" y1="769.5" x2="752.5" y2="772" stroke="#54ffff" stroke-width="1" shape-rendering="crispEdges"/>
<line x1="783.5" y1="769.5" x2="783.5" y2="770.5" stroke="#54ffff" stroke-width="1" shape-rendering="crispEdges"/>
<line x1="814.5" y1="769.5" x2="814.5" y2="771.5" stroke="#54ffff" stroke-width="1" shape-rendering="crispEdges"/>
<line x1="845.5" y1="769.5" x2="845.5" y2="772" stroke="#54ffff" stroke-width="1" shape-rendering="crispEdges"/>
<line x1="876.5" y1="769.5" x2="876.5" y2="773.7" stroke="#54ffff" stroke-width="1" shape-rendering="crispEdges"/>
<line x1="907.5" y1="769.5" x2="907.5" y2="774.5" stroke="#54ffff" stroke-width="1" shape-rendering="crispEdges"/>
<line x1="938.5" y1="769.5" x2="938.5" y2="764.3" stroke="#e04848" stroke-width="1" shape-rendering="crispEdges"/>
<line x1="968.5" y1="769.5" x2="968.5" y2="749.7" stroke="#e04848" stroke-width="1" shape-rendering="crispEdges"/>
<line x1="999.5" y1="769.5" x2="999.5" y2="716" stroke="#e04848" stroke-width="1" shape-rendering="crispEdges"/>
<line x1="1030.5" y1="769.5" x2="1030.5" y2="697.7" stroke="#e04848" stroke-width="1" shape-rendering="crispEdges"/>
<line x1="1061.5" y1="769.5" x2="1061.5" y2="680.5" stroke="#e04848" stroke-width="1" shape-rendering="crispEdges"/>
<line x1="1092.5" y1="769.5" x2="1092.5" y2="683.4" stroke="#e04848" stroke-width="1" shape-rendering="crispEdges"/>
<line x1="1123.5" y1="769.5" x2="1123.5" y2="685.3" stroke="#e04848" stroke-width="1" shape-rendering="crispEdges"/>
<line x1="1153.5" y1="769.5" x2="1153.5" y2="698.7" stroke="#e04848" stroke-width="1" shape-rendering="crispEdges"/>
<line x1="1184.5" y1="769.5" x2="1184.5" y2="711.5" stroke="#e04848" stroke-width="1" shape-rendering="crispEdges"/>
<line x1="1215.5" y1="769.5" x2="1215.5" y2="732.3" stroke="#e04848" stroke-width="1" shape-rendering="crispEdges"/>
<line x1="1246.5" y1="769.5" x2="1246.5" y2="732.3" stroke="#e04848" stroke-width="1" shape-rendering="crispEdges"/>
<line x1="1277.5" y1="769.5" x2="1277.5" y2="733.4" stroke="#e04848" stroke-width="1" shape-rendering="crispEdges"/>
<line x1="1308.5" y1="769.5" x2="1308.5" y2="745" stroke="#e04848" stroke-width="1" shape-rendering="crispEdges"/>
<line x1="1339.5" y1="769.5" x2="1339.5" y2="753.4" stroke="#e04848" stroke-width="1" shape-rendering="crispEdges"/>
<line x1="1400.5" y1="769.5" x2="1400.5" y2="777.9" stroke="#54ffff" stroke-width="1" shape-rendering="crispEdges"/>
<line x1="1431.5" y1="769.5" x2="1431.5" y2="791.7" stroke="#54ffff" stroke-width="1" shape-rendering="crispEdges"/>
<line x1="1462.5" y1="769.5" x2="1462.5" y2="800.8" stroke="#54ffff" stroke-width="1" shape-rendering="crispEdges"/>
<line x1="1493.5" y1="769.5" x2="1493.5" y2="819.8" stroke="#54ffff" stroke-width="1" shape-rendering="crispEdges"/>
<line x1="1524.5" y1="769.5" x2="1524.5" y2="829.3" stroke="#54ffff" stroke-width="1" shape-rendering="crispEdges"/>
<polyline points="12.5,828.7 43.0,827.0 105.0,822.5 167.0,817.0 228.5,809.0 259.4,806.0 290.0,805.0 352.0,804.0 414.0,802.4 470.0,801.3 537.0,798.0 583.0,796.6 700.0,795.0 800.0,797.4 876.6,798.8 907.0,799.3 938.3,797.4 969.0,795.0 1000.0,789.0 1031.0,780.8 1061.8,768.7 1092.6,756.3 1123.5,746.9 1154.0,738.0 1185.0,730.5 1216.0,725.4 1247.0,721.4 1278.0,716.2 1308.6,713.3 1339.5,711.5 1370.0,711.5 1401.0,712.6 1432.0,715.9 1462.6,719.9 1493.6,725.4 1524.4,733.4" fill="none" stroke="#e6e650" stroke-width="1.1" />
<polyline points="12.5,832.5 43.0,825.0 74.0,818.5 105.0,815.4 136.0,809.0 167.0,801.8 197.7,798.0 228.5,794.6 259.4,795.5 290.0,800.0 321.0,802.4 352.0,802.4 383.0,801.8 414.0,800.0 444.5,798.6 470.0,796.6 506.0,793.0 537.0,791.0 568.0,792.4 583.0,793.3 675.0,794.7 700.0,796.0 740.0,798.0 800.0,798.5 846.0,800.0 876.6,802.0 907.0,802.0 938.3,792.4 969.0,785.5 1000.0,761.0 1031.0,742.5 1061.8,723.0 1092.6,713.3 1123.5,704.0 1154.0,702.4 1185.0,701.7 1216.0,707.0 1247.0,702.4 1278.0,698.7 1308.6,700.6 1339.5,703.5 1370.0,710.8 1401.0,717.0 1432.0,726.0 1462.6,735.0 1493.6,749.8 1524.4,763.6" fill="none" stroke="#ffffff" stroke-width="1.1" />
<polyline points="12.5,946.6 43.0,928.7 74.0,950.4 105.0,965.0 136.0,945.0 167.0,931.0 197.7,944.5 228.5,925.0 259.4,937.0 290.0,949.8 321.0,942.0 352.0,935.0 383.0,939.0 414.0,932.0 444.5,939.0 475.0,931.0 506.0,917.5 566.6,938.0 628.7,925.5 721.0,944.8 784.7,934.6 907.5,952.5 936.5,938.0 969.6,919.4 1000.0,894.6 1061.8,855.5 1092.6,869.0 1123.5,856.2 1154.0,867.5 1185.0,876.7 1216.0,890.9 1247.0,874.8 1278.0,862.0 1308.6,878.5 1339.5,867.2 1370.0,877.4 1401.0,886.5 1432.0,898.5 1462.6,909.0 1493.6,923.7 1524.4,918.2" fill="none" stroke="#ffffff" stroke-width="1.1" />
<polyline points="566.6,948.4 613.5,949.0 718.4,944.0 784.7,939.0 815.0,938.0 936.5,938.0 990.0,937.5 1216.0,918.6 1401.0,906.5 1524.4,904.7" fill="none" stroke="#e6e650" stroke-width="1.1" />
<line x1="900" y1="737" x2="931.2" y2="776.8" stroke="#ff00ff" stroke-width="3"/><polygon points="938,785.5 935.2,773.8 927.3,779.9" fill="#ff00ff"/>
<line x1="874.5" y1="858" x2="930.5" y2="917.5" stroke="#ff00ff" stroke-width="3"/><polygon points="938,925.5 934.1,914.1 926.8,920.9" fill="#ff00ff"/>
<text x="12" y="980" font-size="12.5" fill="#e03030">2020年</text>
<line x1="320.5" y1="968" x2="320.5" y2="983" stroke="#b40000"/><text x="323" y="980" font-size="12.5" fill="#e03030">11</text>
<line x1="967.5" y1="968" x2="967.5" y2="983" stroke="#b40000"/><text x="970" y="980" font-size="12.5" fill="#e03030">12</text>
</svg>
<div id="menubar" class="abs">
<svg class="abs" style="left:1px;top:3px" width="18" height="18"><rect width="17" height="17" fill="#e03436"/><path d="M7 1.500 L2 6.500 L5 8.500 L4 14 Q5.500 17 8.500 15.500 L16.500 5.500 L9.500 9 L8.500 3 Z" fill="#f6f6f6"/></svg>
<span class="t" style="left:27px">系统</span>
<span class="t" style="left:70px">功能</span>
<span class="t" style="left:112px">报价</span>
<span class="t" style="left:155px">分析</span>
<span class="t" style="left:196px">扩展市场行情</span>
<span class="t" style="left:284px">资讯</span>
<span class="t" style="left:327px">工具</span>
<span class="t" style="left:370px">帮助</span>
<div class="abs" style="left:418px;top:0;width:40px;height:23px;border-left:1px solid #c8c8c8;border-right:1px solid #c8c8c8;background:linear-gradient(#fff,#f2f2f2)"></div>
<span class="t" style="left:426px;color:#d01818">市场</span>
<span class="t" style="left:1007px;color:#d01818">通达信金融终端&nbsp;&nbsp; 品渥食品</span>
<div class="tbtn" style="left:1703px;width:34px">行情</div>
<div class="tbtn" style="left:1739px;width:34px">资讯</div>
<div class="tbtn" style="left:1776px;width:34px">交易</div>
<div class="tbtn" style="left:1813px;width:34px">服务</div>
<div class="wc" style="left:1851px"><svg width="20" height="20" style="position:absolute;left:-1px;top:-1px"><path d="M5 13.5h9" stroke="#666" stroke-width="2"/></svg></div>
<div class="wc" style="left:1873px"><svg width="20" height="20" style="position:absolute;left:-1px;top:-1px"><path d="M5.5 8.5h6v5h-6z M8 8V6h6v5h-2" stroke="#666" stroke-width="1.4" fill="none"/></svg></div>
<div class="wc" style="left:1895px"><svg width="20" height="20" style="position:absolute;left:-1px;top:-1px"><path d="M6 6l8 8M14 6l-8 8" stroke="#666" stroke-width="2.2"/></svg></div>
</div>
<div id="prow">
<div class="abs" style="left:0;top:23px;width:1920px;height:1px;background:#222"></div>
<svg class="abs" style="left:0;top:24px" width="24" height="21"><path d="M.5 21V.5H22.500V21" stroke="#b40000" fill="none"/><rect x="4.500" y="4.500" width="11" height="10" rx="1.500" fill="none" stroke="#aaa"/><rect x="9.500" y="6" width="5" height="7" fill="#aaa"/></svg>
<span class="t" style="left:28px;letter-spacing:-1px">分时</span>
<span class="t" style="left:61px;letter-spacing:-1px">1分钟</span>
<span class="t" style="left:100px;letter-spacing:-1px">5分钟</span>
<span class="t" style="left:139px;letter-spacing:-1px">15分钟</span>
<span class="t" style="left:185px;letter-spacing:-1px">30分钟</span>
<span class="t" style="left:231px;letter-spacing:-1px">60分钟</span>
<span class="t" style="left:278px;letter-spacing:-1px;color:#54ffff">日线</span>
<span class="t" style="left:312px;letter-spacing:-1px">周线</span>
<span class="t" style="left:346px;letter-spacing:-1px">月线</span>
<span class="t" style="left:378px;letter-spacing:-1px">多周期</span>
<span class="t" style="left:422px;letter-spacing:-1px">更多</span>
<svg class="abs" style="left:448px;top:28px" width="10" height="12"><path d="M2 1l5 5l-5 5" stroke="#bbb" fill="none"/></svg>
<div class="rb" style="left:1370px;width:35px;letter-spacing:-.6px">复权</div>
<div class="rb" style="left:1405px;width:35px;letter-spacing:-.6px">叠加</div>
<div class="rb" style="left:1440px;width:35px;letter-spacing:-.6px">历史</div>
<div class="rb" style="left:1475px;width:35px;letter-spacing:-.6px">统计</div>
<div class="rb" style="left:1510px;width:35px;letter-spacing:-.6px;color:#54ffff">画线</div>
<div class="rb" style="left:1545px;width:35px;letter-spacing:-.6px">F10</div>
<div class="rb" style="left:1580px;width:35px;letter-spacing:-.6px">标记</div>
<div class="rb" style="left:1615px;width:35px;letter-spacing:-1px">+自选</div>
<div class="rb" style="left:1650px;width:35px;letter-spacing:-.6px">返回</div>
<span class="t" style="left:2px;top:48px;font-size:12.5px;color:#d0d0d0;letter-spacing:-.5px">品渥食品(日线.前复权)</span>
<svg class="abs" style="left:127px;top:48px" width="13" height="13"><circle cx="6.5" cy="6.5" r="5.8" fill="#777"/><path d="M3.5 5.5l3 3l3-3" stroke="#ddd" stroke-width="1.4" fill="none"/></svg>
<span class="t" style="left:144px;top:48px;font-size:12px;letter-spacing:0;color:#c0c0c0">MA88(5,10,20,60,120,0,0,0,0,0)</span><span class="t" style="left:319px;top:48px;font-size:12px;letter-spacing:0;color:#fff">MA1: 73.58</span><span class="t" style="left:385px;top:48px;font-size:12px;letter-spacing:0;color:#e6e650">MA2: 64.95</span><span class="t" style="left:449px;top:48px;font-size:12px;letter-spacing:0;color:#e040e0">MA3: 62.36</span><span class="t" style="left:514px;top:48px;font-size:12px;letter-spacing:0;color:#30e830">MA4: -</span><span class="t" style="left:552px;top:48px;font-size:12px;letter-spacing:0;color:#d0d0d0">MA5: -</span>
<svg class="abs" style="left:1600px;top:47px" width="36" height="16"><path d="M7.5 3l4.5 4.5l-4.5 4.5l-4.5-4.5z" stroke="#888" fill="none"/><rect x="20.5" y="2.5" width="11" height="10" rx="1.5" fill="none" stroke="#999"/><rect x="26" y="4" width="4" height="7" fill="#999"/></svg>
<svg class="abs" style="left:1px;top:407px" width="13" height="13"><circle cx="6.5" cy="6.5" r="5.8" fill="#777"/><path d="M3.5 5.5l3 3l3-3" stroke="#ddd" stroke-width="1.4" fill="none"/></svg>
<span class="t" style="left:18px;top:407px;font-size:12px;letter-spacing:0;color:#c0c0c0">VOL-TDX(5,10)</span><span class="t" style="left:105px;top:407px;font-size:12px;letter-spacing:0;color:#e0e0e0">VVOL: -</span><span class="t" style="left:155px;top:407px;font-size:12px;letter-spacing:0;color:#e6e650">VOLUME: 78003.37</span><span class="t" style="left:267px;top:407px;font-size:12px;letter-spacing:0;color:#e6e650">MA5: 79902.38</span>
<svg class="abs" style="left:1px;top:661px" width="13" height="13"><circle cx="6.5" cy="6.5" r="5.8" fill="#777"/><path d="M3.5 5.5l3 3l3-3" stroke="#ddd" stroke-width="1.4" fill="none"/></svg>
<span class="t" style="left:18px;top:662px;font-size:12px;letter-spacing:0;color:#c0c0c0">MACD(12,26,9)</span><span class="t" style="left:106px;top:662px;font-size:12px;letter-spacing:0;color:#e8e8e8">DIF: 3.18</span><span class="t" style="left:160px;top:662px;font-size:12px;letter-spacing:0;color:#e6e650">DEA: 0.06</span><span class="t" style="left:219px;top:662px;font-size:12px;letter-spacing:0;color:#e040e0">MACD: 6.26</span>
<svg class="abs" style="left:1px;top:838px" width="13" height="13"><circle cx="6.5" cy="6.5" r="5.8" fill="#777"/><path d="M3.5 5.5l3 3l3-3" stroke="#ddd" stroke-width="1.4" fill="none"/></svg>
<span class="t" style="left:18px;top:838px;font-size:12px;letter-spacing:0;color:#c0c0c0">OBV(30)</span><span class="t" style="left:69px;top:838px;font-size:12px;letter-spacing:0;color:#e8e8e8">OBV: 272619.88</span><span class="t" style="left:163px;top:838px;font-size:12px;letter-spacing:0;color:#e6e650">MAOBV: -35298.00</span>
<span class="t" style="left:220px;top:391px;width:14px;height:13px;font-size:12px;color:#fff;background:#06143c;text-align:center;line-height:13px">财</span>
<span class="t" style="left:992px;top:391px;width:13px;height:13px;font-size:12px;color:#fff;background:#8a1010;text-align:center;line-height:13px">张</span>
<span class="t" style="left:1054px;top:391px;width:13px;height:13px;font-size:12px;color:#fff;background:#8a5a10;text-align:center;line-height:13px">榜</span>
</div>
<div id="rp" class="abs" style="left:1687px;top:24px;width:233px;height:976px;overflow:hidden">
<span class="t r b" style="left:17px;top:-2.0px;font-size:10px">Z</span>
<span class="t r b" style="left:24px;top:-1.0px;font-size:10px">R</span>
<span class="t b" style="left:34px;top:4.0px;color:#ffff30;font-size:14.5px;letter-spacing:-.3px">300892</span>
<span class="t " style="left:85px;top:4.0px;color:#ffff30;font-size:15.5px">品渥食品</span>
<div class="hl" style="left:0;top:26px;width:233px"></div>
<span class="t w" style="left:2px;top:28.0px;font-size:15.5px">委比</span>
<span class="t g b" style="right:117px;top:28.0px;letter-spacing:-.7px;font-size:14.5px">-50.60%</span>
<span class="t w" style="left:118px;top:28.0px;font-size:15.5px">委差</span>
<span class="t g b" style="right:1px;top:28.0px;">-84</span>
<div class="hl" style="left:0;top:47px;width:233px"></div>
<span class="t w" style="left:2px;top:48.5px;font-size:15.5px">卖五</span>
<span class="t r b" style="right:118px;top:48.5px;">62.85</span>
<span class="t y b" style="right:51px;top:48.5px;">14</span>
<span class="t w" style="left:2px;top:67.5px;font-size:15.5px">卖四</span>
<span class="t r b" style="right:118px;top:67.5px;">62.84</span>
<span class="t y b" style="right:51px;top:67.5px;">49</span>
<span class="t w" style="left:2px;top:86.5px;font-size:15.5px">卖三</span>
<span class="t r b" style="right:118px;top:86.5px;">62.83</span>
<span class="t y b" style="right:51px;top:86.5px;">17</span>
<span class="t w" style="left:2px;top:105.5px;font-size:15.5px">卖二</span>
<span class="t r b" style="right:118px;top:105.5px;">62.78</span>
<span class="t y b" style="right:51px;top:105.5px;">44</span>
<span class="t w" style="left:2px;top:124.5px;font-size:15.5px">卖一</span>
<span class="t r b" style="right:118px;top:124.5px;">62.75</span>
<span class="t y b" style="right:51px;top:124.5px;">1</span>
<div class="hl" style="left:0;top:143px;width:233px"></div>
<span class="t w" style="left:2px;top:145.0px;font-size:15.5px">买一</span>
<span class="t r b" style="right:118px;top:145.0px;">62.70</span>
<span class="t y b" style="right:51px;top:145.0px;">24</span>
<span class="t w" style="left:2px;top:164.0px;font-size:15.5px">买二</span>
<span class="t r b" style="right:118px;top:164.0px;">62.68</span>
<span class="t y b" style="right:51px;top:164.0px;">3</span>
<span class="t w" style="left:2px;top:183.0px;font-size:15.5px">买三</span>
<span class="t r b" style="right:118px;top:183.0px;">62.66</span>
<span class="t y b" style="right:51px;top:183.0px;">1</span>
<span class="t w" style="left:2px;top:202.0px;font-size:15.5px">买四</span>
<span class="t r b" style="right:118px;top:202.0px;">62.56</span>
<span class="t y b" style="right:51px;top:202.0px;">1</span>
<span class="t r" style="right:1px;top:202.0px;font-size:13px">+1</span>
<span class="t w" style="left:2px;top:221.0px;font-size:15.5px">买五</span>
<span class="t r b" style="right:118px;top:221.0px;">62.55</span>
<span class="t y b" style="right:51px;top:221.0px;">12</span>
<span class="t r" style="right:1px;top:221.0px;font-size:13px">+12</span>
<svg class="abs" style="left:120px;top:147px" width="10" height="12"><path d="M5 1v8M1.5 6l3.5 4l3.5-4" stroke="#14b414" stroke-width="1.6" fill="none"/></svg>
<div class="hl" style="left:0;top:240px;width:233px"></div>
<span class="t w" style="left:2px;top:242.0px;font-size:15.5px">现价</span>
<span class="t r b" style="right:118px;top:242.0px;">62.71</span>
<span class="t w" style="left:118px;top:242.0px;font-size:15.5px">今开</span>
<span class="t g b" style="right:1px;top:242.0px;">62.00</span>
<span class="t w" style="left:2px;top:261.0px;font-size:15.5px">涨跌</span>
<span class="t r b" style="right:118px;top:261.0px;">0.21</span>
<span class="t w" style="left:118px;top:261.0px;font-size:15.5px">最高</span>
<span class="t r b" style="right:1px;top:261.0px;">63.48</span>
<span class="t w" style="left:2px;top:280.0px;font-size:15.5px">涨幅</span>
<span class="t r b" style="right:118px;top:280.0px;">0.34%</span>
<span class="t w" style="left:118px;top:280.0px;font-size:15.5px">最低</span>
<span class="t g b" style="right:1px;top:280.0px;">60.21</span>
<span class="t w" style="left:2px;top:299.0px;font-size:15.5px">总量</span>
<span class="t y b" style="right:118px;top:299.0px;">13896</span>
<span class="t w" style="left:118px;top:299.0px;font-size:15.5px">量比</span>
<span class="t g b" style="right:1px;top:299.0px;">0.87</span>
<span class="t w" style="left:2px;top:318.0px;font-size:15.5px">外盘</span>
<span class="t r b" style="right:118px;top:318.0px;">2815</span>
<span class="t w" style="left:118px;top:318.0px;font-size:15.5px">内盘</span>
<span class="t g b" style="right:1px;top:318.0px;">11081</span>
<div class="hl" style="left:0;top:337px;width:233px"></div>
<span class="t w" style="left:2px;top:339.0px;font-size:15.5px">换手</span>
<span class="t w b" style="right:118px;top:339.0px;">5.99%</span>
<span class="t w" style="left:118px;top:339.0px;font-size:15.5px">股本</span>
<span class="t w b" style="right:1px;top:339.0px;">1.00亿</span>
<span class="t w" style="left:2px;top:358.0px;font-size:15.5px">净资</span>
<span class="t w b" style="right:118px;top:358.0px;">11.38</span>
<span class="t w" style="left:118px;top:358.0px;font-size:15.5px">流通</span>
<span class="t w b" style="right:1px;top:358.0px;">2371万</span>
<span class="t w" style="left:2px;top:377.0px;font-size:15.5px">收益㈢</span>
<span class="t w b" style="right:118px;top:377.0px;">1.070</span>
<span class="t w" style="left:118px;top:377.0px;font-size:15.5px">PE(动)</span>
<span class="t w b" style="right:1px;top:377.0px;">45.9</span>
<div class="hl" style="left:0;top:397px;width:233px"></div>
<span class="t w" style="right:53px;top:399.0px;font-size:15.5px;letter-spacing:.3px">注册制 投票权无差异</span>
<div class="hl" style="left:0;top:418px;width:233px"></div>
<span class="t w" style="right:96px;top:419.0px;font-size:15.5px;letter-spacing:-3px">连续竞价</span>
<div class="hl" style="left:0;top:438px;width:233px"></div>
<span class="t w" style="left:1px;top:438.6px;letter-spacing:-.3px">13:10</span><span class="t r" style="right:121px;top:438.6px;">62.75</span><span class="t y" style="right:54px;top:438.6px;">12</span><span class="t g" style="left:190px;top:438.6px;">S</span><span class="t gy" style="left:225px;top:438.6px;">1</span>
<span class="t w" style="left:1px;top:456.6px;letter-spacing:-.3px">13:10</span><span class="t r" style="right:121px;top:456.6px;">62.78</span><span class="t y" style="right:54px;top:456.6px;">1</span><span class="t r" style="left:190px;top:456.6px;">B</span><span class="t gy" style="left:225px;top:456.6px;">1</span>
<span class="t w" style="left:1px;top:474.6px;letter-spacing:-.3px">13:10</span><span class="t r" style="right:121px;top:474.6px;">62.78</span><span class="t y" style="right:54px;top:474.6px;">1</span><span class="t g" style="left:190px;top:474.6px;">S</span><span class="t gy" style="left:225px;top:474.6px;">1</span>
<span class="t w" style="left:1px;top:492.6px;letter-spacing:-.3px">13:10</span><span class="t r" style="right:121px;top:492.6px;">62.78</span><span class="t y" style="right:54px;top:492.6px;">1</span><span class="t g" style="left:190px;top:492.6px;">S</span><span class="t gy" style="left:225px;top:492.6px;">1</span>
<span class="t w" style="left:1px;top:510.6px;letter-spacing:-.3px">13:10</span><span class="t r" style="right:121px;top:510.6px;">62.85</span><span class="t y" style="right:54px;top:510.6px;">3</span><span class="t r" style="left:190px;top:510.6px;">B</span><span class="t gy" style="left:225px;top:510.6px;">3</span>
<span class="t w" style="left:1px;top:528.6px;letter-spacing:-.3px">13:10</span><span class="t r" style="right:121px;top:528.6px;">62.84</span><span class="t y" style="right:54px;top:528.6px;">2</span><span class="t r" style="left:190px;top:528.6px;">B</span><span class="t gy" style="left:225px;top:528.6px;">1</span>
<span class="t w" style="left:1px;top:546.6px;letter-spacing:-.3px">13:10</span><span class="t r" style="right:121px;top:546.6px;">62.85</span><span class="t y" style="right:54px;top:546.6px;">5</span><span class="t g" style="left:190px;top:546.6px;">S</span><span class="t gy" style="left:225px;top:546.6px;">1</span>
<span class="t w" style="left:1px;top:565.0px;letter-spacing:-.3px">13:11</span><span class="t r" style="right:121px;top:565.0px;">62.78</span><span class="t y" style="right:54px;top:565.0px;">1</span><span class="t g" style="left:190px;top:565.0px;">S</span><span class="t gy" style="left:225px;top:565.0px;">1</span>
<span class="t w" style="left:1px;top:583.0px;letter-spacing:-.3px">13:11</span><span class="t r" style="right:121px;top:583.0px;">62.78</span><span class="t y" style="right:54px;top:583.0px;">1</span><span class="t g" style="left:190px;top:583.0px;">S</span><span class="t gy" style="left:225px;top:583.0px;">1</span>
<span class="t w" style="left:1px;top:601.0px;letter-spacing:-.3px">13:11</span><span class="t r" style="right:121px;top:601.0px;">62.78</span><span class="t y" style="right:54px;top:601.0px;">12</span><span class="t g" style="left:190px;top:601.0px;">S</span><span class="t gy" style="left:225px;top:601.0px;">4</span>
<span class="t w" style="left:1px;top:619.0px;letter-spacing:-.3px">13:11</span><span class="t r" style="right:121px;top:619.0px;">62.78</span><span class="t y" style="right:54px;top:619.0px;">1</span><span class="t r" style="left:190px;top:619.0px;">B</span><span class="t gy" style="left:225px;top:619.0px;">1</span>
<span class="t w" style="left:1px;top:637.0px;letter-spacing:-.3px">13:11</span><span class="t r" style="right:121px;top:637.0px;">62.84</span><span class="t y" style="right:54px;top:637.0px;">2</span><span class="t r" style="left:190px;top:637.0px;">B</span><span class="t gy" style="left:225px;top:637.0px;">1</span>
<span class="t w" style="left:1px;top:655.0px;letter-spacing:-.3px">13:11</span><span class="t r" style="right:121px;top:655.0px;">62.78</span><span class="t y" style="right:54px;top:655.0px;">1</span><span class="t g" style="left:190px;top:655.0px;">S</span><span class="t gy" style="left:225px;top:655.0px;">1</span>
<span class="t w" style="left:1px;top:673.0px;letter-spacing:-.3px">13:11</span><span class="t r" style="right:121px;top:673.0px;">62.78</span><span class="t y" style="right:54px;top:673.0px;">3</span><span class="t g" style="left:190px;top:673.0px;">S</span><span class="t gy" style="left:225px;top:673.0px;">2</span>
<span class="t w" style="left:1px;top:691.0px;letter-spacing:-.3px">13:12</span><span class="t r" style="right:121px;top:691.0px;">62.78</span><span class="t y" style="right:54px;top:691.0px;">7</span><span class="t g" style="left:190px;top:691.0px;">S</span><span class="t gy" style="left:225px;top:691.0px;">1</span>
<span class="t w" style="left:1px;top:709.0px;letter-spacing:-.3px">13:12</span><span class="t r" style="right:121px;top:709.0px;">62.83</span><span class="t y" style="right:54px;top:709.0px;">2</span><span class="t r" style="left:190px;top:709.0px;">B</span><span class="t gy" style="left:225px;top:709.0px;">1</span>
<span class="t w" style="left:1px;top:727.0px;letter-spacing:-.3px">13:12</span><span class="t r" style="right:121px;top:727.0px;">62.78</span><span class="t y" style="right:54px;top:727.0px;">12</span><span class="t g" style="left:190px;top:727.0px;">S</span><span class="t gy" style="left:225px;top:727.0px;">4</span>
<span class="t w" style="left:1px;top:745.0px;letter-spacing:-.3px">13:12</span><span class="t r" style="right:121px;top:745.0px;">62.78</span><span class="t y" style="right:54px;top:745.0px;">20</span><span class="t r" style="left:190px;top:745.0px;">B</span><span class="t gy" style="left:225px;top:745.0px;">1</span>
<span class="t w" style="left:1px;top:763.0px;letter-spacing:-.3px">13:12</span><span class="t r" style="right:121px;top:763.0px;">62.78</span><span class="t y" style="right:54px;top:763.0px;">5</span><span class="t r" style="left:190px;top:763.0px;">B</span><span class="t gy" style="left:225px;top:763.0px;">1</span>
<span class="t w" style="left:1px;top:781.0px;letter-spacing:-.3px">13:13</span><span class="t r" style="right:121px;top:781.0px;">62.74</span><span class="t y" style="right:54px;top:781.0px;">11</span><span class="t g" style="left:190px;top:781.0px;">S</span><span class="t gy" style="left:225px;top:781.0px;">2</span>
<span class="t w" style="left:1px;top:799.0px;letter-spacing:-.3px">13:13</span><span class="t r" style="right:121px;top:799.0px;">62.78</span><span class="t y" style="right:54px;top:799.0px;">1</span><span class="t r" style="left:190px;top:799.0px;">B</span><span class="t gy" style="left:225px;top:799.0px;">1</span>
<span class="t w" style="left:1px;top:817.0px;letter-spacing:-.3px">13:14</span><span class="t r" style="right:121px;top:817.0px;">62.76</span><span class="t y" style="right:54px;top:817.0px;">1</span><span class="t r" style="left:190px;top:817.0px;">B</span><span class="t gy" style="left:225px;top:817.0px;">1</span>
<span class="t w" style="left:1px;top:835.0px;letter-spacing:-.3px">13:14</span><span class="t r" style="right:121px;top:835.0px;">62.78</span><span class="t y" style="right:54px;top:835.0px;">2</span><span class="t r" style="left:190px;top:835.0px;">B</span><span class="t gy" style="left:225px;top:835.0px;">2</span>
<span class="t w" style="left:1px;top:853.0px;letter-spacing:-.3px">13:14</span><span class="t r" style="right:121px;top:853.0px;">62.78</span><span class="t y" style="right:54px;top:853.0px;">10</span><span class="t r" style="left:190px;top:853.0px;">B</span><span class="t gy" style="left:225px;top:853.0px;">3</span>
<span class="t w" style="left:1px;top:871.0px;letter-spacing:-.3px">13:14</span><span class="t r" style="right:121px;top:871.0px;">62.78</span><span class="t y" style="right:54px;top:871.0px;">1</span><span class="t r" style="left:190px;top:871.0px;">B</span><span class="t gy" style="left:225px;top:871.0px;">1</span>
<span class="t w" style="left:1px;top:889.0px;letter-spacing:-.3px">13:14</span><span class="t r" style="right:121px;top:889.0px;">62.75</span><span class="t y" style="right:54px;top:889.0px;">2</span><span class="t g" style="left:190px;top:889.0px;">S</span><span class="t gy" style="left:225px;top:889.0px;">1</span>
<span class="t w" style="left:1px;top:907.0px;letter-spacing:-.3px">13:14</span><span class="t r" style="right:121px;top:907.0px;">62.74</span><span class="t y" style="right:54px;top:907.0px;">3</span><span class="t g" style="left:190px;top:907.0px;">S</span><span class="t gy" style="left:225px;top:907.0px;">2</span>
<span class="t w" style="left:1px;top:925.0px;letter-spacing:-.3px">13:14</span><span class="t r" style="right:121px;top:925.0px;">62.74</span><span class="t y" style="right:54px;top:925.0px;">4</span><span class="t g" style="left:190px;top:925.0px;">S</span><span class="t gy" style="left:225px;top:925.0px;">4</span>
<span class="t w" style="left:1px;top:943.0px;letter-spacing:-.3px">13:14</span><span class="t r" style="right:121px;top:943.0px;">62.71</span><span class="t y" style="right:54px;top:943.0px;">2</span><span class="t g" style="left:190px;top:943.0px;">S</span><span class="t gy" style="left:225px;top:943.0px;">2</span>
</div>
<div class="tab" style="left:0px;width:37px;letter-spacing:-.5px">指标A</div>
<div class="tab" style="left:37px;width:31px;letter-spacing:-.5px">窗口</div>
<div class="tab" style="left:68px;width:42px;letter-spacing:-.5px">MACD</div>
<div class="tab" style="left:110px;width:29px;letter-spacing:-.5px">DMI</div>
<div class="tab" style="left:139px;width:33px;letter-spacing:-.5px">DMA</div>
<div class="tab" style="left:172px;width:30px;letter-spacing:-.5px">FSL</div>
<div class="tab" style="left:202px;width:34px;letter-spacing:-.5px">TRIX</div>
<div class="tab" style="left:236px;width:41px;letter-spacing:-.5px">BRAR</div>
<div class="tab" style="left:277px;width:26px;letter-spacing:-.5px">CR</div>
<div class="tab" style="left:303px;width:24px;letter-spacing:-.5px">VR</div>
<div class="tab" style="left:327px;width:32px;letter-spacing:-.5px;color:#54ffff">OBV</div>
<div class="tab" style="left:359px;width:26px;letter-spacing:-.5px">ASI</div>
<div class="tab" style="left:385px;width:32px;letter-spacing:-.5px">EMV</div>
<div class="tab" style="left:417px;width:58px;letter-spacing:-.5px">VOL-TDX</div>
<div class="tab" style="left:475px;width:28px;letter-spacing:-.5px">RSI</div>
<div class="tab" style="left:503px;width:28px;letter-spacing:-.5px">WR</div>
<div class="tab" style="left:531px;width:32px;letter-spacing:-.5px">SAR</div>
<div class="tab" style="left:563px;width:31px;letter-spacing:-.5px">KDJ</div>
<div class="tab" style="left:594px;width:29px;letter-spacing:-.5px">CCI</div>
<div class="tab" style="left:623px;width:35px;letter-spacing:-.5px">ROC</div>
<div class="tab" style="left:658px;width:33px;letter-spacing:-.5px">MTM</div>
<div class="tab" style="left:691px;width:39px;letter-spacing:-.5px">BOLL</div>
<div class="tab" style="left:730px;width:31px;letter-spacing:-.5px">PSY</div>
<div class="tab" style="left:761px;width:41px;letter-spacing:-.5px">MCST</div>
<div class="tab" style="left:802px;width:32px;letter-spacing:-.5px">更多</div>
<div class="tab" style="left:834px;width:32px;letter-spacing:-.5px">设置</div>
<div class="tab" style="left:0;top:1001px;width:44px;letter-spacing:-.5px">扩展∧</div>
<div class="tab" style="left:44px;top:1001px;width:56px;letter-spacing:-.5px">关联报价</div>
<div class="hl" style="left:0;top:1018px;width:1920px;background:#a00000"></div>
<div class="hl" style="left:866px;top:1000px;width:1054px"></div>
<div class="tab" style="left:1564px;width:36px;border-left:1px solid #b40000;letter-spacing:-.5px">指标B</div>
<div class="tab" style="left:1600px;width:36px">模 板</div>
<div class="tab" style="left:1636px;width:25px">+</div>
<div class="tab" style="left:1661px;width:26px">−</div>
<div class="tab" style="left:1636px;top:967px;width:51px;height:17px;border-left:1px solid #b40000;border-top:1px solid #b40000;color:#d0d0d0;line-height:15px">日线</div>
<div class="tab" style="left:1599px;top:1001px;width:88px;border-left:1px solid #b40000;letter-spacing:-.6px;color:#e0e0e0">新用户福利专享</div>
<div class="tab" style="left:1687px;top:1001px;width:28px;color:#54ffff">笔</div>
<div class="tab" style="left:1715px;top:1001px;width:29px">价</div>
<div class="tab" style="left:1744px;top:1001px;width:29px">细</div>
<div class="tab" style="left:1773px;top:1001px;width:29px">势</div>
<div class="tab" style="left:1802px;top:1001px;width:29px">联</div>
<div class="tab" style="left:1831px;top:1001px;width:29px">值</div>
<div class="tab" style="left:1860px;top:1001px;width:29px">主</div>
<div class="tab" style="left:1889px;top:1001px;width:31px">筹</div>
<div id="status" class="abs">
<span class="t " style="left:0px;letter-spacing:0">上证</span>
<span class="t r" style="left:27px;letter-spacing:-.3px">3390.59</span>
<span class="t r" style="left:84px;letter-spacing:-.3px">27.48</span>
<span class="t r" style="left:125px;letter-spacing:-.3px">0.82%</span>
<span class="t " style="left:169px;letter-spacing:0">2249亿</span>
<span class="t " style="left:219px;letter-spacing:0">深证</span>
<span class="t r" style="left:248px;letter-spacing:-.3px">13993.6</span>
<span class="t r" style="left:304px;letter-spacing:-.3px">78.03</span>
<span class="t r" style="left:345px;letter-spacing:-.3px">0.56%</span>
<span class="t " style="left:389px;letter-spacing:0">2719亿</span>
<span class="t " style="left:440px;letter-spacing:0">中小</span>
<span class="t r" style="left:467px;letter-spacing:-.3px">9337.64</span>
<span class="t r" style="left:524px;letter-spacing:-.3px">62.75</span>
<span class="t r" style="left:565px;letter-spacing:-.3px">0.68%</span>
<span class="t " style="left:609px;letter-spacing:0">1072亿</span>
<span class="t " style="left:659px;letter-spacing:0">创业</span>
<span class="t r" style="left:687px;letter-spacing:-.3px">2829.17</span>
<span class="t r" style="left:748px;letter-spacing:-.3px">8.42</span>
<span class="t r" style="left:785px;letter-spacing:-.3px">0.30%</span>
<span class="t " style="left:829px;letter-spacing:0">1009亿</span>
<span class="t " style="left:880px;letter-spacing:0">科创</span>
<span class="t r" style="left:907px;letter-spacing:-.3px">1354.31</span>
<span class="t r" style="left:968px;letter-spacing:-.3px">6.30</span>
<span class="t r" style="left:1005px;letter-spacing:-.3px">0.47%</span>
<span class="t " style="left:1049px;letter-spacing:0">169.2亿</span>
<span class="t " style="left:1215px;letter-spacing:0">上海双线主站6</span>
<div class="abs" style="left:1100px;top:2px;width:1px;height:17px;background:#bbb"></div><div class="abs" style="left:1208px;top:2px;width:1px;height:17px;background:#bbb"></div>
<svg class="abs" style="left:1104px;top:3px" width="104" height="16"><rect x="10" y="1" width="11" height="5" fill="#e01010"/><rect x="23" y="1" width="11" height="5" fill="#10a010"/><rect x="2" y="8" width="5" height="2" fill="#e01010"/><rect x="2" y="12" width="5" height="2" fill="#e01010"/><rect x="8" y="8" width="5" height="2" fill="#e01010"/><rect x="8" y="12" width="5" height="2" fill="#e01010"/><rect x="14" y="8" width="5" height="2" fill="#e01010"/><rect x="14" y="12" width="5" height="2" fill="#e01010"/><rect x="20" y="8" width="5" height="2" fill="#e01010"/><rect x="20" y="12" width="5" height="2" fill="#e01010"/><rect x="26" y="8" width="5" height="2" fill="#10a010"/><rect x="26" y="12" width="5" height="2" fill="#10a010"/><rect x="32" y="8" width="5" height="2" fill="#10a010"/><rect x="32" y="12" width="5" height="2" fill="#10a010"/><rect x="38" y="8" width="5" height="2" fill="#10a010"/><rect x="38" y="12" width="5" height="2" fill="#10a010"/><rect x="44" y="8" width="5" height="2" fill="#10a010"/><rect x="44" y="12" width="5" height="2" fill="#10a010"/><rect x="62" y="1" width="11" height="5" fill="#e01010"/><rect x="75" y="1" width="11" height="5" fill="#10a010"/><rect x="54" y="8" width="5" height="2" fill="#e01010"/><rect x="54" y="12" width="5" height="2" fill="#e01010"/><rect x="60" y="8" width="5" height="2" fill="#e01010"/><rect x="60" y="12" width="5" height="2" fill="#e01010"/><rect x="66" y="8" width="5" height="2" fill="#e01010"/><rect x="66" y="12" width="5" height="2" fill="#e01010"/><rect x="72" y="8" width="5" height="2" fill="#e01010"/><rect x="72" y="12" width="5" height="2" fill="#e01010"/><rect x="78" y="8" width="5" height="2" fill="#10a010"/><rect x="78" y="12" width="5" height="2" fill="#10a010"/><rect x="84" y="8" width="5" height="2" fill="#10a010"/><rect x="84" y="12" width="5" height="2" fill="#10a010"/><rect x="90" y="8" width="5" height="2" fill="#10a010"/><rect x="90" y="12" width="5" height="2" fill="#10a010"/><rect x="96" y="8" width="5" height="2" fill="#10a010"/><rect x="96" y="12" width="5" height="2" fill="#10a010"/></svg>
<svg class="abs" style="left:1835px;top:2px" width="85" height="18"><rect x="2.5" y="2.5" width="12" height="12" fill="#fff" stroke="#888"/><path d="M4 6h9M4 9h9M4 12h9" stroke="#aaa"/><rect x="22" y="3" width="12" height="12" rx="3" fill="#d8d020" stroke="#8a8400"/><path d="M28 6v6M25.5 8.5L28 6l2.500 2.500" stroke="#555" fill="none"/><path d="M41 4l8 6l-4 1l2 4h-5l1-4z" fill="#777"/><path d="M61 3l4 5h-3l4 4h-10l4-4h-3z" fill="#666"/><path d="M76 3v11M74 6l2-3l2 3" stroke="#666" fill="none"/></svg>
</div>
<div id="taskbar" class="abs">
<svg class="abs" style="left:1280px;top:0" width="130" height="40"><path d="M20 0 Q70 10 100 40" stroke="rgba(255,255,255,.28)" stroke-width="9" fill="none" filter="blur(2px)"/></svg>
<svg class="abs" style="left:6px;top:-1px" width="42" height="42"><defs><radialGradient id="orb" cx="50%" cy="35%" r="65%"><stop offset="0" stop-color="#d8f0fb"/><stop offset=".4" stop-color="#5aaee0"/><stop offset=".8" stop-color="#2270b4"/><stop offset="1" stop-color="#3f9ad0"/></radialGradient></defs><circle cx="21" cy="21" r="18.5" fill="url(#orb)" stroke="#7fb8e0" stroke-width="1"/><path d="M12 14c3-1.500 5-1.500 8 0l-1.500 6c-3-1.500-5-1.500-8 0z" fill="#f0582c"/><path d="M22 14.500c3 1.500 5 1.500 8 0l-1.500 6c-3 1.500-5 1.500-8 0z" fill="#8cc63c"/><path d="M10 22c3-1.500 5-1.500 8 0l-1.500 6c-3-1.500-5-1.500-8 0z" fill="#3ca0e8"/><path d="M20 22.500c3 1.500 5 1.500 8 0l-1.500 6c-3 1.500-5 1.500-8 0z" fill="#f8c81c"/></svg>
<div class="tk" style="left:60px;width:159px"><svg class="abs" style="left:8px;top:2px" width="32" height="32"><defs><linearGradient id="lg1" x1="0" y1="0" x2="1" y2="1"><stop offset="0" stop-color="#f7a0a0"/><stop offset=".5" stop-color="#e83c3c"/><stop offset="1" stop-color="#cc1418"/></linearGradient></defs><rect width="32" height="32" fill="url(#lg1)"/><path d="M13 3 L4 12 L9 16 L7 27 Q10 32 16 29 L31 10 L18 17 L16 6 Z" fill="#f4f4f4"/></svg><span class="t">通达信金融终端V...</span></div>
<div class="tk" style="left:222px;width:159px;background:linear-gradient(rgba(255,255,255,.42),rgba(255,255,255,.25) 45%,rgba(255,255,255,.14) 52%,rgba(255,255,255,.22));box-shadow:inset 0 0 0 1px rgba(255,255,255,.3)"><svg class="abs" style="left:8px;top:1px" width="34" height="36"><path d="M9 3l20 2l-5 28l-20-3z" fill="#e8f4f8" stroke="#8fb4c8"/><path d="M9 3l20 2l-3.500 20l-20-3z" fill="#7fd0dc"/><path d="M9 3l20 2l-1 5l-20-2z" fill="#3aa8bc"/><path d="M24 33l5-6l-4 0z" fill="#c8d8e0"/></svg><span class="t" style="left:43px">选股技巧 - 记事本</span></div>
<svg class="abs" style="left:1670px;top:4px" width="150" height="32"><rect x="6" y="6" width="15" height="15" rx="2" fill="#f0f0f0" stroke="#e8641c" stroke-width="1.5"/><text x="13.500" y="19" text-anchor="middle" font-size="13" font-weight="bold" fill="#e8501c">S</text><rect x="33.500" y="6.500" width="6" height="4" fill="none" stroke="#fff"/><rect x="31.500" y="9.500" width="6" height="4" fill="#2a5f98" stroke="#fff"/><path d="M32 17h6l-3 3z" fill="#fff"/><rect x="50" y="9" width="16" height="16" rx="3" fill="#e01428"/><circle cx="58" cy="17.500" r="4.500" fill="none" stroke="#fff" stroke-width="1.500"/><path d="M58 17v-5l3 1" stroke="#fff" stroke-width="1.300" fill="none"/><g fill="#f2a0b4"><circle cx="83" cy="12" r="3.500"/><circle cx="78" cy="16" r="3.500"/><circle cx="88" cy="16" r="3.500"/><circle cx="80" cy="21" r="3.500"/><circle cx="86" cy="21" r="3.500"/></g><circle cx="83" cy="17" r="3" fill="#e8e0f0"/><rect x="101.500" y="12.500" width="11" height="8" fill="#2a5f98" stroke="#fff" stroke-width="1.400"/><path d="M104 24h7M107.500 21v3" stroke="#fff" stroke-width="1.400"/><path d="M100 8v6M98.500 9h3" stroke="#fff"/><path d="M123 14h3l4-4v14l-4-4h-3z" fill="#fff"/><path d="M132 13q2 4 0 8M134.500 11q3.500 6 0 12" stroke="#fff" fill="none"/></svg>
<span class="t" style="left:1829px;width:64px;text-align:center;top:5px;font-size:12.5px;color:#fff">13:15</span>
<span class="t" style="left:1826px;width:70px;text-align:center;top:23px;font-size:12.5px;color:#fff">2020-12-25</span>
<div class="abs" style="left:1906px;top:0;width:14px;height:40px;border-left:1px solid #7fa5cc;background:linear-gradient(rgba(255,255,255,.3),rgba(255,255,255,.08))"></div>
</div>
<div class="dlg" style="left:353px;top:317px;width:546px;height:434px;box-shadow:0 0 0 1px rgba(255,255,255,.55)">
<div class="ttl" style="height:22px;background:#cd4646"><span class="t" style="left:5px;top:4px;color:#fff;letter-spacing:-.3px">条件选股</span><svg class="abs" style="left:508px;top:3px" width="36" height="16"><path d="M3 7.500h10" stroke="#f2b8b8" stroke-width="1.2"/><path d="M23 2l10 10M33 2l-10 10" stroke="#f2b8b8" stroke-width="1.2"/></svg></div>
<span class="t" style="left:6px;top:32px;">条件选股公式</span>
<div class="cmb" style="left:86px;top:30px;width:325px;height:22px;line-height:19px;padding-left:3px"><span class="mono">TEST21&nbsp;&nbsp;&nbsp;&nbsp;&nbsp;&nbsp;&nbsp;-</span><i></i></div>
<div class="btn" style="left:418px;top:30px;width:57px;height:23px;line-height:20px">用法注释</div>
<div class="btn" style="left:482px;top:30px;width:56px;height:23px;line-height:20px">查看公式</div>
<div class="grp" style="left:4px;top:68px;width:209px;height:199px"><b>计算参数</b></div>
<span class="t" style="left:11px;top:94.5px;">无参数需要设置</span>
<svg class="abs" style="left:191px;top:89px" width="18" height="122"><path d="M5 9l4-4l4 4z" fill="#444"/><defs><linearGradient id="sbg" x1="0" x2="1"><stop offset="0" stop-color="#f4f4f4"/><stop offset="1" stop-color="#c8c8c8"/></linearGradient></defs><rect x="1.500" y="16.500" width="14" height="55" rx="1.5" fill="url(#sbg)" stroke="#a8a8a8"/><path d="M5 40h7M5 43h7M5 46h7" stroke="#777"/><path d="M5 112l4 4l4-4z" fill="#444"/></svg>
<span class="t" style="left:13px;top:240.5px;">选股周期:</span>
<div class="cmb" style="left:73px;top:238px;width:128px;height:22px;line-height:19px;padding-left:4px">日线<i></i></div>
<div class="grp" style="left:4px;top:281px;width:209px;height:142px"><b>选股范围</b></div>
<span class="t" style="left:10px;top:294px;font-family:'Liberation Serif','Noto Sans CJK SC',serif">上证<b style="margin:0 2px">A</b>股&nbsp; 深证<b style="margin:0 2px">A</b>股</span>
<div class="btn dis" style="left:139px;top:290px;width:63px;height:22px;line-height:19px">改变范围</div>
<div class="btn dis" style="left:223px;top:73px;width:66px;height:23px;line-height:20px">加入条件</div>
<div class="btn dis" style="left:223px;top:111px;width:66px;height:23px;line-height:20px">删除条件</div>
<div class="btn dis" style="left:223px;top:184px;width:66px;height:23px;line-height:20px">引入方案</div>
<div class="btn dis" style="left:223px;top:222px;width:66px;height:23px;line-height:20px">保存方案</div>
<span class="t" style="left:303px;top:56.5px;">选股条件列表</span>
<div class="abs" style="left:301px;top:75px;width:236px;height:174px;background:#fff;border:1px solid #82878f"><div class="abs" style="left:1px;top:1px;width:232px;height:16px;background:#3399ff;color:#fff;font-size:12px;line-height:15px;padding-left:1px;white-space:nowrap"><span class="mono" style="margin-right:-9.600px">TEST21&nbsp;&nbsp;</span>日线</div></div>
<svg class="abs" style="left:301px;top:256px" width="13" height="13"><circle cx="6.500" cy="6.500" r="5.200" fill="#f4f4f4" stroke="#fff"/><path d="M2.800 10.200A5.200 5.200 0 0 1 10.200 2.800" stroke="#707070" stroke-width="1.300" fill="none"/><circle cx="6.500" cy="6.500" r="2.200" fill="#8a8a8a"/></svg>
<span class="t" style="left:318px;top:255px;color:#8c8c8c;text-shadow:1px 1px 0 #fff">全部条件相与</span>
<svg class="abs" style="left:444px;top:256px" width="13" height="13"><circle cx="6.500" cy="6.500" r="5.200" fill="#f4f4f4" stroke="#fff"/><path d="M2.800 10.200A5.200 5.200 0 0 1 10.200 2.800" stroke="#707070" stroke-width="1.300" fill="none"/></svg>
<span class="t" style="left:462px;top:255px;color:#8c8c8c;text-shadow:1px 1px 0 #fff">全部条件相或</span>
<span class="t" style="left:288px;top:276px;color:#e01010;letter-spacing:.1px">选股在下载的本地数据中进行,请确保数据完整</span>
<div class="chk dis" style="left:223px;top:298px"></div>
<span class="t" style="left:241px;top:298px;color:#555">使用涨跌不定周期</span>
<div class="fld" style="left:343px;top:298px;width:193px;height:13px"></div>
<span class="t" style="left:341px;top:321px;">品种数</span>
<div class="fld" style="left:380px;top:321px;width:40px;height:14px;padding:0 0 0 1px"><span class="mono">4158</span></div>
<span class="t" style="left:427px;top:321px;">选中数</span>
<div class="fld" style="left:465px;top:321px;width:71px;height:14px;padding:0 0 0 1px"><span class="mono">0</span></div>
<div class="chk on" style="left:224px;top:349px"></div>
<span class="t" style="left:240px;top:349px;color:#3a3a3a">前复权数据</span>
<div class="chk on" style="left:311px;top:349px"></div>
<span class="t" style="left:327px;top:349px;color:#3a3a3a">剔除当前未交易的品种</span>
<div class="chk on" style="left:458px;top:349px"></div>
<span class="t" style="left:474px;top:349px;color:#3a3a3a">剔除ST品种</span>
<div class="chk on" style="left:224px;top:378px"></div>
<span class="t" style="left:240px;top:378px;color:#3a3a3a">时间段内满足条件</span>
<div class="btn dis" style="left:385px;top:372px;width:72px;height:23px;line-height:20px">选股入板块</div>
<div class="btn dis" style="left:471px;top:372px;width:66px;height:23px;line-height:20px">执行选股</div>
<div class="dp" style="left:223px;top:402px;width:96px;height:20px;line-height:18px;padding-left:3px">2020-11-30<i></i></div>
<span class="t" style="left:332px;top:402px;font-family:'Liberation Mono',monospace">-</span>
<div class="dp" style="left:351px;top:402px;width:96px;height:20px;line-height:18px;padding-left:3px">2020-11-30<i></i></div>
<div class="btn" style="left:471px;top:399px;width:66px;height:23px;line-height:20px">停止选股</div>
</div>
<div class="dlg" style="left:808px;top:474px;width:304px;height:91px;box-shadow:0 0 0 1px rgba(255,255,255,.5)">
<div class="ttl" style="height:22px;background:#b83434"><span class="t" style="left:5px;top:4px;color:#fff;letter-spacing:-.3px">刷新数据</span><svg class="abs" style="left:286px;top:4px" width="14" height="14"><path d="M3 2l9 9M12 2l-9 9" stroke="#f0a8a8" stroke-width="1.2"/></svg></div>
<span class="t" style="left:9px;top:32px">正在刷新当前行情<span class="mono">...[68%]</span></span>
<div class="abs" style="left:7px;top:60px;width:225px;height:17px;border-top:1px solid #b8b8b8;border-bottom:1px solid #fff;background:#efefef"><div style="width:158px;height:15px;background:linear-gradient(90deg,#6a44f4,#9a3ce0 40%,#d83cb8)"></div></div>
<div class="btn" style="left:238px;top:57px;width:58px;height:23px;line-height:20px">取消</div>
</div>
<div class="abs" style="left:1681px;top:228px;width:105px;height:362px;background:#2e2e2e;border:1px solid #8a8a8a;box-shadow:inset 0 0 0 1px #1a1a1a">
<div class="abs" style="left:2px;top:2px;width:99px;height:20px;background:linear-gradient(90deg,#2a2a2a,#5a5a5a 30%,#3a3a3a 55%,#2c2c2c)"></div>
<div class="abs" style="left:82px;top:4px;width:17px;height:16px;border:1px solid #8a8080;background:#4a4848;color:#fff;font-size:12px;font-weight:bold;text-align:center;line-height:13px">×</div>
<div class="abs" style="left:3px;top:23px;width:97px;height:335px;background:#f0f0f0;border:1px solid #111;box-shadow:inset 0 0 0 1px #fff, inset 0 0 0 2px #9a9a9a"></div>
<svg class="abs" style="left:0;top:0" width="105" height="362" viewBox="1682 229 105 362"><g transform="translate(1698.8,264.4)"><path d="M-4 -7v13l3-3l2.500 5l2-1l-2.500-5h4.500z" fill="#fff" stroke="#000" stroke-width="1.1"/></g><g transform="translate(1721.0,264.4)"><path d="M-4 4L5 -5" stroke="#0a0aa0" stroke-width="1.1" fill="none"/><rect x="-5.2" y="2.8" width="2.400" height="2.400" fill="#000"/><rect x="3.8" y="-6.2" width="2.400" height="2.400" fill="#000"/></g><g transform="translate(1743.7,264.4)"><path d="M-7 7L7 -7" stroke="#0a0aa0" stroke-width="1.1" fill="none"/><rect x="-5.2" y="2.8" width="2.400" height="2.400" fill="#000"/><rect x="2.8" y="-5.2" width="2.400" height="2.400" fill="#000"/></g><g transform="translate(1767.4,264.4)"><path d="M-5 5L6 -6M1.500 -6H6V-1.500" stroke="#0a0aa0" stroke-width="1.1" fill="none"/><rect x="-6.2" y="3.8" width="2.400" height="2.400" fill="#000"/></g><g transform="translate(1698.8,286.4)"><path d="M-7 7L7 -7" stroke="#0a0aa0" stroke-width="1.1" fill="none"/><rect x="-7.7" y="5.3" width="2.400" height="2.400" fill="#000"/><rect x="1.8" y="-4.2" width="2.400" height="2.400" fill="#000"/></g><g transform="translate(1721.0,286.4)"><path d="M-7 0H7" stroke="#0a0aa0" stroke-width="1.1" fill="none"/><rect x="-1.8" y="-1.8" width="3.600" height="3.600" fill="#000"/></g><g transform="translate(1743.7,286.4)"><path d="M-6 0H7" stroke="#0a0aa0" stroke-width="1.1" fill="none"/><rect x="-7.8" y="-1.8" width="3.600" height="3.600" fill="#000"/></g><g transform="translate(1767.4,286.4)"><path d="M-6 0H6" stroke="#0a0aa0" stroke-width="1.1" fill="none"/><rect x="-7.8" y="-1.8" width="3.600" height="3.600" fill="#000"/><rect x="4.2" y="-1.8" width="3.600" height="3.600" fill="#000"/></g><g transform="translate(1698.8,308.4)"><path d="M0 -7V7" stroke="#0a0aa0" stroke-width="1.1" fill="none"/><rect x="-1.8" y="-1.8" width="3.600" height="3.600" fill="#000"/></g><g transform="translate(1721.0,308.4)"><text x="0" y="2.5" font-size="9.5" fill="#0a0aa0" text-anchor="middle" >I23</text><path d="M-5 6H7" stroke="#0a0aa0" stroke-width="1.1" fill="none"/><rect x="-6.8" y="4.2" width="3.600" height="3.600" fill="#000"/></g><g transform="translate(1743.7,308.4)"><path d="M-7 2L3 -7M-5 7L7 -5M1 7L8 0" stroke="#0a0aa0" stroke-width="1.1" fill="none"/><rect x="-5.2" y="-1.7" width="2.400" height="2.400" fill="#000"/><rect x="-4.2" y="3.8" width="2.400" height="2.400" fill="#000"/><rect x="1.8" y="-2.2" width="2.400" height="2.400" fill="#000"/><rect x="3.8" y="-4.2" width="2.400" height="2.400" fill="#000"/></g><g transform="translate(1767.4,308.4)"><path d="M-7 3L4 -7M-5 8L8 -5" stroke="#0a0aa0" stroke-width="1.1" fill="none"/><rect x="-5.2" y="-0.7" width="2.400" height="2.400" fill="#000"/><rect x="-3.2" y="3.8" width="2.400" height="2.400" fill="#000"/><rect x="2.8" y="-2.2" width="2.400" height="2.400" fill="#000"/></g><g transform="translate(1698.8,330.4)"><path d="M-5 -1L1 -7M-5 7L7 -5" stroke="#0a0aa0" stroke-width="1.1" fill="none"/><rect x="-6.2" y="-2.2" width="2.400" height="2.400" fill="#000"/><rect x="-6.2" y="5.8" width="2.400" height="2.400" fill="#000"/><rect x="1.8" y="-2.2" width="2.400" height="2.400" fill="#000"/></g><g transform="translate(1721.0,330.4)"><path d="M-1 -6A6 6 0 0 1 -1 6" stroke="#0a0aa0" stroke-width="1.5" fill="none"/></g><g transform="translate(1743.7,330.4)"><path d="M-3 -7H3L7 -3V3L3 7H-3L-7 3V-3Z" stroke="#000" stroke-width="1.1" fill="none"/><path d="M0 0L4 -4" stroke="#000" stroke-width="1.1" fill="none"/><rect x="-1.2" y="-1.2" width="2.400" height="2.400" fill="#000"/></g><g transform="translate(1767.4,330.4)"><path d="M-3 -7H3L7 -3V3L3 7H-3L-7 3V-3Z" stroke="#000" stroke-width="1.1" fill="none"/><path d="M-5 -5L7 -2L2 6Q-3 2 -5 -5" stroke="#0a0aa0" stroke-width="1.1" fill="none"/></g><g transform="translate(1698.8,352.4)"><path d="M-7 -5L-4 6L-1 -5L2 6L6 -5" stroke="#0a0aa0" stroke-width="1.3" fill="none"/></g><g transform="translate(1721.0,352.4)"><path d="M-7 6L-5 1L-3 5L-1 -6L1 3L3 -1L5 5L6 3" stroke="#0a0aa0" stroke-width="1.2" fill="none"/></g><g transform="translate(1743.7,352.4)"><path d="M-7 6L-4 2L-2 4L1 -2L3 0L7 -7" stroke="#0a0aa0" stroke-width="1.2" fill="none"/></g><g transform="translate(1767.4,352.4)"><path d="M-6 -6L-1 4L1 -3L7 7" stroke="#0a0aa0" stroke-width="1.3" fill="none"/></g><g transform="translate(1698.8,374.4)"><path d="M-7 7L-5 1L-3 3L-1 -4L0 -1L2 -5L3 0L5 -1L7 5" stroke="#0a0aa0" stroke-width="1.2" fill="none"/></g><g transform="translate(1721.0,374.4)"><path d="M-7 -6H7" stroke="#000" stroke-width="1.1" fill="none"/><text x="-1" y="2.5" font-size="8" fill="#0a0aa0" text-anchor="middle" font-weight='bold'>GP</text><path d="M-7 4H7" stroke="#0a0aa0" stroke-width="1.1" fill="none"/><path d="M-7 7H7" stroke="#0a0aa0" stroke-width="1.1" fill="none"/></g><g transform="translate(1743.7,374.4)"><path d="M-7 -6H7" stroke="#000" stroke-width="1.1" fill="none"/><text x="-1" y="2.5" font-size="8" fill="#0a0aa0" text-anchor="middle" font-weight='bold'>GA</text><path d="M-7 4H7" stroke="#0a0aa0" stroke-width="1.1" fill="none"/><path d="M-7 7H7" stroke="#0a0aa0" stroke-width="1.1" fill="none"/></g><g transform="translate(1767.4,374.4)"><path d="M-7 -6H7" stroke="#000" stroke-width="1.1" fill="none"/><text x="-4" y="2.5" font-size="8" fill="#0a0aa0" text-anchor="middle" font-weight='bold'>G</text><path d="M-7 4H7" stroke="#0a0aa0" stroke-width="1.1" fill="none"/><path d="M-7 7H7" stroke="#0a0aa0" stroke-width="1.1" fill="none"/></g><g transform="translate(1698.8,396.4)"><path d="M-7 -6H7M-7 7H7" stroke="#0a0aa0" stroke-width="1.1" fill="none"/><path d="M-1 -3H7M-1 0H7M-7 3H7" stroke="#888" stroke-width="1.1" fill="none"/><text x="-4" y="1" font-size="7" fill="#0a0aa0" text-anchor="middle" font-weight='bold'>%</text></g><g transform="translate(1721.0,396.4)"><path d="M-7 -6H7M-7 7H7" stroke="#0a0aa0" stroke-width="1.1" fill="none"/><path d="M0 -3H7M0 0H7M-7 3H7" stroke="#888" stroke-width="1.1" fill="none"/><text x="-4" y="1.5" font-size="8" fill="#0a0aa0" text-anchor="middle" font-weight='bold'>T</text></g><g transform="translate(1743.7,396.4)"><path d="M-6 -4V7M6 -7V5" stroke="#000" stroke-width="1.1" fill="none"/><path d="M-6 -3L6 -7M-6 1L6 -3M-6 5L6 1" stroke="#0a0aa0" stroke-width="1.1" fill="none"/></g><g transform="translate(1767.4,396.4)"><path d="M-6 -4V7M5 -7V7" stroke="#000" stroke-width="1.1" fill="none"/><path d="M-6 -3L8 -7M-6 1L8 -3M-6 5L8 1" stroke="#0a0aa0" stroke-width="1.1" fill="none"/></g><g transform="translate(1698.8,418.4)"><path d="M-7 -6V7M6 -7V6" stroke="#000" stroke-width="1.1" fill="none"/><path d="M-7 2L6 -3" stroke="#0a0aa0" stroke-width="1.1" fill="none"/></g><g transform="translate(1721.0,418.4)"><path d="M-6 -6V6M6 -6V6" stroke="#0a0aa0" stroke-width="1.1" fill="none"/><path d="M-2 -6V6M2 -6V6" stroke="#000" stroke-width="1.1" fill="none"/></g><g transform="translate(1743.7,418.4)"><path d="M-7 -6V6M-5 -6V6M5 -6V6" stroke="#0a0aa0" stroke-width="1.1" fill="none"/><path d="M-1 -6V6" stroke="#0a0aa0" stroke-width="1.1" fill="none"/></g><g transform="translate(1767.4,418.4)"><path d="M-7 -6V6" stroke="#0a0aa0" stroke-width="1.1" fill="none"/><path d="M-3 -6V6" stroke="#888" stroke-width="1.1" fill="none"/><path d="M6 -6V6" stroke="#000" stroke-width="1.1" fill="none"/><text x="1" y="0" font-size="7" fill="#0a0aa0" text-anchor="middle" font-weight='bold'>G</text></g><g transform="translate(1698.8,440.4)"><path d="M-7 -6V6M-5 -6V6" stroke="#0a0aa0" stroke-width="1.1" fill="none"/><path d="M-2 -6V6M2 -6V6M7 -6V6" stroke="#000" stroke-width="1.1" fill="none"/></g><g transform="translate(1721.0,440.4)"><path d="M-7 -6V6M-5 -6V6M-3 -6V6M-1 -6V6" stroke="#0a0aa0" stroke-width="1.4" fill="none"/><path d="M2 -6V6M7 -6V6" stroke="#000" stroke-width="1.1" fill="none"/></g><g transform="translate(1743.7,440.4)"><path d="M-7 -6V6" stroke="#0a0aa0" stroke-width="1.1" fill="none"/><path d="M-2 -6V6M0 -6V6M2 -6V6M7 -6V6" stroke="#000" stroke-width="1.1" fill="none"/></g><g transform="translate(1767.4,440.4)"><path d="M-7 6L7 -6" stroke="#000" stroke-width="1.1" fill="none"/><path d="M-7 6L7 -2M-7 6L7 2" stroke="#0a0aa0" stroke-width="1.1" fill="none"/></g><g transform="translate(1698.8,462.4)"><path d="M-7 -7V7H7" stroke="#0a0aa0" stroke-width="1.4" fill="none"/><path d="M-7 7L5 -6M-7 7L7 -2M-7 7L7 3M-7 7L-2 -7" stroke="#0a0aa0" stroke-width="1.1" fill="none"/></g><g transform="translate(1721.0,462.4)"><path d="M0 -6V6M-7 -2L0 6L7 -2" stroke="#000" stroke-width="1.1" fill="none"/></g><g transform="translate(1743.7,462.4)"><path d="M-6 -3L6 -6L0 6Z" stroke="#0a0aa0" stroke-width="1.3" fill="none"/><rect x="-7.2" y="-4.2" width="2.400" height="2.400" fill="#000"/><rect x="4.8" y="-7.2" width="2.400" height="2.400" fill="#000"/><rect x="-1.2" y="4.8" width="2.400" height="2.400" fill="#000"/></g><g transform="translate(1767.4,462.4)"><path d="M-6 -5H6V5H-6Z" stroke="#0a0aa0" stroke-width="1.4" fill="none"/></g><g transform="translate(1698.8,484.4)"><path d="M0 -6l-4.500 5h3v6h3v-6h3z" fill="#f01818"/></g><g transform="translate(1721.0,484.4)"><path d="M0 6l-4.500 -5h3v-6h3v6h3z" fill="#10a010"/></g><g transform="translate(1743.7,484.4)"><path d="M-6 6L5 -6" stroke="#000" stroke-width="1.1" fill="none"/><rect x="-7.2" y="4.8" width="2.400" height="2.400" fill="#000"/><rect x="2.8" y="-6.2" width="2.400" height="2.400" fill="#000"/><path d="M4 -1l-4 4h2.500v3h3v-3h2.500z" fill="#f01818"/></g><g transform="translate(1767.4,484.4)"><text x="0" y="5" font-size="13" fill="#000" text-anchor="middle" font-weight='bold'>A</text></g><g transform="translate(1698.8,506.4)"><text x="1" y="6" font-size="13" fill="#000" text-anchor="middle" font-weight='bold'>A</text><path d="M-7 -4h5M-4.500 -6.500v5" stroke="#000" stroke-width="1.1" fill="none"/></g><g transform="translate(1721.0,506.4)"><rect x="-6" y="-6" width="12" height="12" fill="#a8a8a8" stroke="#888"/><rect x="-4" y="-4" width="8" height="8" fill="#989898"/></g><g transform="translate(1743.7,506.4)"><path d="M-5 -5L5 5M5 -5L-5 5" stroke="#e01818" stroke-width="1.6" fill="none"/></g><g transform="translate(1767.4,506.4)"><circle cx="4" cy="-3" r="3" fill="#f0f020" stroke="#c8c800"/><rect x="-6" y="0" width="4" height="6" fill="none" stroke="#aaa"/><path d="M-3 -3L6 5" stroke="#ccc"/></g><g transform="translate(1698.8,528.4)"><rect x="-6.500" y="-6.500" width="13" height="13" fill="#fff" stroke="#000" stroke-width="1.200"/><path d="M-4 -3.500H4M-4 -1H4M-4 1.500H4M-4 4H4" stroke="#0a0aa0" stroke-width="1.1" fill="none"/></g><g transform="translate(1721.0,528.4)"><rect x="-6.500" y="-3.500" width="13" height="7" fill="#fff" stroke="#000" stroke-width="1.200"/><path d="M-4 -3V-1M-2 -3V0M0 -3V-1M2 -3V0M4 -3V-1" stroke="#0a0aa0" stroke-width="1.1" fill="none"/><path d="M-6 -3H6" stroke="#0a0aa0" stroke-width="1.1" fill="none"/></g><g transform="translate(1743.7,528.4)"><rect x="-6" y="-4.500" width="12" height="9" fill="#e8f4e8" stroke="#000" stroke-width="1.200"/><rect x="-4" y="-2.500" width="4" height="5" fill="#188038"/></g><g transform="translate(1698.8,550.4)"><text x="0" y="5" font-size="14" fill="#e01818" text-anchor="middle" >上</text></g><g transform="translate(1721.0,550.4)"><text x="0" y="5" font-size="14" fill="#109010" text-anchor="middle" >下</text></g><g transform="translate(1743.7,550.4)"><path d="M0 -7l5 4h-10z" fill="#f01818"/><path d="M-4 -2h8v3h-8z" fill="#f0d818"/><path d="M0 1l5 5h-10z" fill="#10a010"/></g><g transform="translate(1698.8,572.4)"><text x="0" y="5" font-size="13" fill="#aaa" text-anchor="middle" >买</text></g><g transform="translate(1721.0,572.4)"><text x="0" y="5" font-size="13" fill="#aaa" text-anchor="middle" >卖</text></g><g transform="translate(1743.7,572.4)"><text x="0" y="5" font-size="13" fill="#aaa" text-anchor="middle" >平</text></g></svg>
</div>
<div class="abs" style="left:907px;top:249px;width:40px;height:40px;border-radius:50%;background:#6e4c1a"></div><svg class="abs" style="left:927px;top:270px" width="14" height="20"><path d="M1 1v14l3.500-3l2.500 5.500l2.200-1l-2.500-5.500h4.800z" fill="#fff" stroke="#000" stroke-width="1"/></svg>
</body></html>
